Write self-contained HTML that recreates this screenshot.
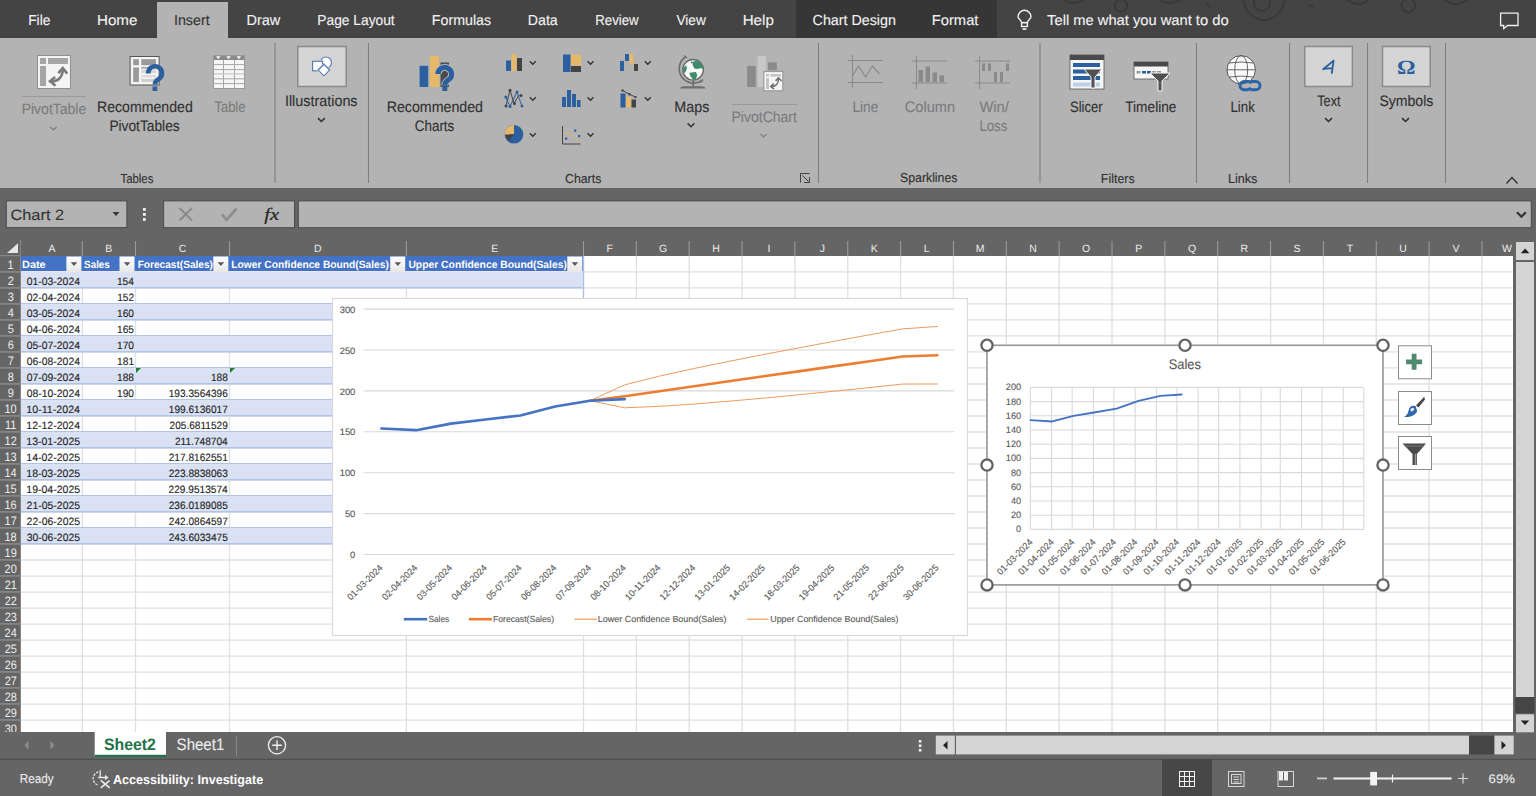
<!DOCTYPE html>
<html><head><meta charset="utf-8"><title>Excel</title>
<style>html,body{margin:0;padding:0;background:#656565;}body{width:1536px;height:796px;overflow:hidden;position:relative;font-family:"Liberation Sans",sans-serif;}svg{position:absolute;left:0;top:0;display:block}</style>
</head><body>
<svg width="1536" height="796" viewBox="0 0 1536 796" text-rendering="geometricPrecision">
<rect x="0" y="0" width="1536" height="38" fill="#444444"/>
<rect x="796" y="0" width="201" height="38" fill="#363636"/>
<rect x="0" y="38" width="1536" height="150" fill="#b3b3b3"/>
<rect x="0" y="188" width="1536" height="52" fill="#656565"/>
<rect x="157" y="2" width="71" height="36" fill="#b3b3b3"/>
<text x="28.20" y="24.80" font-size="14.5" fill="#f2f2f2" font-weight="400" font-family="Liberation Sans" stroke="#f2f2f2" stroke-width="0.12" textLength="22.25" lengthAdjust="spacingAndGlyphs">File</text>
<text x="96.99" y="24.80" font-size="14.5" fill="#f2f2f2" font-weight="400" font-family="Liberation Sans" stroke="#f2f2f2" stroke-width="0.12" textLength="40.43" lengthAdjust="spacingAndGlyphs">Home</text>
<text x="246.54" y="24.80" font-size="14.5" fill="#f2f2f2" font-weight="400" font-family="Liberation Sans" stroke="#f2f2f2" stroke-width="0.12" textLength="33.74" lengthAdjust="spacingAndGlyphs">Draw</text>
<text x="317.30" y="24.80" font-size="14.5" fill="#f2f2f2" font-weight="400" font-family="Liberation Sans" stroke="#f2f2f2" stroke-width="0.12" textLength="77.38" lengthAdjust="spacingAndGlyphs">Page Layout</text>
<text x="431.86" y="24.80" font-size="14.5" fill="#f2f2f2" font-weight="400" font-family="Liberation Sans" stroke="#f2f2f2" stroke-width="0.12" textLength="59.20" lengthAdjust="spacingAndGlyphs">Formulas</text>
<text x="527.87" y="24.80" font-size="14.5" fill="#f2f2f2" font-weight="400" font-family="Liberation Sans" stroke="#f2f2f2" stroke-width="0.12" textLength="29.86" lengthAdjust="spacingAndGlyphs">Data</text>
<text x="595.34" y="24.80" font-size="14.5" fill="#f2f2f2" font-weight="400" font-family="Liberation Sans" stroke="#f2f2f2" stroke-width="0.12" textLength="43.34" lengthAdjust="spacingAndGlyphs">Review</text>
<text x="676.43" y="24.80" font-size="14.5" fill="#f2f2f2" font-weight="400" font-family="Liberation Sans" stroke="#f2f2f2" stroke-width="0.12" textLength="29.36" lengthAdjust="spacingAndGlyphs">View</text>
<text x="742.69" y="24.80" font-size="14.5" fill="#f2f2f2" font-weight="400" font-family="Liberation Sans" stroke="#f2f2f2" stroke-width="0.12" textLength="31.14" lengthAdjust="spacingAndGlyphs">Help</text>
<text x="812.59" y="24.80" font-size="14.5" fill="#f2f2f2" font-weight="400" font-family="Liberation Sans" stroke="#f2f2f2" stroke-width="0.12" textLength="83.36" lengthAdjust="spacingAndGlyphs">Chart Design</text>
<text x="931.82" y="24.80" font-size="14.5" fill="#f2f2f2" font-weight="400" font-family="Liberation Sans" stroke="#f2f2f2" stroke-width="0.12" textLength="46.58" lengthAdjust="spacingAndGlyphs">Format</text>
<text x="173.91" y="24.80" font-size="14.5" fill="#333333" font-weight="400" font-family="Liberation Sans" stroke="#333333" stroke-width="0.12" textLength="35.77" lengthAdjust="spacingAndGlyphs">Insert</text>
<text x="1047.11" y="24.80" font-size="14.5" fill="#f2f2f2" font-weight="400" font-family="Liberation Sans" stroke="#f2f2f2" stroke-width="0.12" textLength="181.48" lengthAdjust="spacingAndGlyphs">Tell me what you want to do</text>
<g fill="none" stroke="#f0f0f0" stroke-width="1.4"><path d="M1021.6 22.6C1021.6 20.4 1018 18.8 1018 16.8A6.5 6.5 0 1 1 1031 16.8C1031 18.8 1027.4 20.4 1027.4 22.6Z"/><rect x="1021.6" y="22.6" width="5.8" height="3.9"/></g><rect x="1022.6" y="28.2" width="3.8" height="1.8" fill="#e8e8e8"/>
<path d="M1500.6 13.2h17.4v12.3h-10.5l-3.8 3.2v-3.2h-3.1z" fill="none" stroke="#f0f0f0" stroke-width="1.3"/>
<g fill="none" stroke="#393939" stroke-width="2"><circle cx="1074" cy="-12" r="15"/><circle cx="1121" cy="5.5" r="6.2"/><circle cx="1170" cy="-14" r="17"/><path d="M1207 2c0 3 2 5 4.5 4.5"/><circle cx="1264" cy="0" r="20"/><circle cx="1262" cy="3" r="8"/><path d="M1309 4.5c1 2 3 2.5 5 1"/><circle cx="1358" cy="-11" r="15"/><circle cx="1408.3" cy="5.5" r="6.8"/><circle cx="1456" cy="-14" r="18"/></g>
<line x1="275" y1="43" x2="275" y2="183" stroke="#7f7f7f" stroke-width="1.1"/>
<line x1="368.5" y1="43" x2="368.5" y2="183" stroke="#7f7f7f" stroke-width="1.1"/>
<line x1="818.5" y1="43" x2="818.5" y2="183" stroke="#7f7f7f" stroke-width="1.1"/>
<line x1="1040" y1="43" x2="1040" y2="183" stroke="#7f7f7f" stroke-width="1.1"/>
<line x1="1196.5" y1="43" x2="1196.5" y2="183" stroke="#7f7f7f" stroke-width="1.1"/>
<line x1="1289.5" y1="43" x2="1289.5" y2="183" stroke="#7f7f7f" stroke-width="1.1"/>
<line x1="1367.5" y1="43" x2="1367.5" y2="183" stroke="#7f7f7f" stroke-width="1.1"/>
<line x1="1445.5" y1="43" x2="1445.5" y2="183" stroke="#7f7f7f" stroke-width="1.1"/>
<text x="120.47" y="182.60" font-size="13" fill="#303030" font-weight="400" font-family="Liberation Sans" stroke="#303030" stroke-width="0.12" textLength="32.93" lengthAdjust="spacingAndGlyphs">Tables</text>
<text x="564.98" y="182.60" font-size="13" fill="#303030" font-weight="400" font-family="Liberation Sans" stroke="#303030" stroke-width="0.12" textLength="36.35" lengthAdjust="spacingAndGlyphs">Charts</text>
<text x="900.05" y="181.80" font-size="13" fill="#303030" font-weight="400" font-family="Liberation Sans" stroke="#303030" stroke-width="0.12" textLength="57.37" lengthAdjust="spacingAndGlyphs">Sparklines</text>
<text x="1100.80" y="182.60" font-size="13" fill="#303030" font-weight="400" font-family="Liberation Sans" stroke="#303030" stroke-width="0.12" textLength="33.86" lengthAdjust="spacingAndGlyphs">Filters</text>
<text x="1227.99" y="182.60" font-size="13" fill="#303030" font-weight="400" font-family="Liberation Sans" stroke="#303030" stroke-width="0.12" textLength="29.44" lengthAdjust="spacingAndGlyphs">Links</text>
<g fill="none" stroke="#404040" stroke-width="1"><path d="M800.5 182.5v-9h9"/><path d="M802.5 175.5l6 6M809.5 177v5.5h-5.5"/></g>
<path d="M1506.5 183.5l5.5-6 5.5 6" fill="none" stroke="#303030" stroke-width="1.3"/>
<text x="21.68" y="114.40" font-size="15" fill="#7b7b7b" font-weight="400" font-family="Liberation Sans" stroke="#7b7b7b" stroke-width="0.12" textLength="64.53" lengthAdjust="spacingAndGlyphs">PivotTable</text>
<line x1="22" y1="96.5" x2="86" y2="96.5" stroke="#9a9a9a" stroke-width="1"/>
<text x="96.97" y="111.80" font-size="15.2" fill="#303030" font-weight="400" font-family="Liberation Sans" stroke="#303030" stroke-width="0.12" textLength="95.77" lengthAdjust="spacingAndGlyphs">Recommended</text>
<text x="109.40" y="130.80" font-size="15.2" fill="#303030" font-weight="400" font-family="Liberation Sans" stroke="#303030" stroke-width="0.12" textLength="70.27" lengthAdjust="spacingAndGlyphs">PivotTables</text>
<text x="214.54" y="111.80" font-size="15.2" fill="#7b7b7b" font-weight="400" font-family="Liberation Sans" stroke="#7b7b7b" stroke-width="0.12" textLength="30.85" lengthAdjust="spacingAndGlyphs">Table</text>
<text x="284.91" y="106.40" font-size="15.2" fill="#303030" font-weight="400" font-family="Liberation Sans" stroke="#303030" stroke-width="0.12" textLength="72.66" lengthAdjust="spacingAndGlyphs">Illustrations</text>
<text x="386.66" y="111.80" font-size="15.2" fill="#303030" font-weight="400" font-family="Liberation Sans" stroke="#303030" stroke-width="0.12" textLength="96.38" lengthAdjust="spacingAndGlyphs">Recommended</text>
<text x="414.83" y="130.80" font-size="15.2" fill="#303030" font-weight="400" font-family="Liberation Sans" stroke="#303030" stroke-width="0.12" textLength="39.44" lengthAdjust="spacingAndGlyphs">Charts</text>
<text x="674.36" y="111.80" font-size="15.2" fill="#303030" font-weight="400" font-family="Liberation Sans" stroke="#303030" stroke-width="0.12" textLength="34.95" lengthAdjust="spacingAndGlyphs">Maps</text>
<line x1="732" y1="104.5" x2="797" y2="104.5" stroke="#9a9a9a" stroke-width="1"/>
<text x="731.48" y="122.40" font-size="15.2" fill="#7b7b7b" font-weight="400" font-family="Liberation Sans" stroke="#7b7b7b" stroke-width="0.12" textLength="65.44" lengthAdjust="spacingAndGlyphs">PivotChart</text>
<text x="852.41" y="111.80" font-size="15.2" fill="#7b7b7b" font-weight="400" font-family="Liberation Sans" stroke="#7b7b7b" stroke-width="0.12" textLength="25.82" lengthAdjust="spacingAndGlyphs">Line</text>
<text x="904.77" y="111.80" font-size="15.2" fill="#7b7b7b" font-weight="400" font-family="Liberation Sans" stroke="#7b7b7b" stroke-width="0.12" textLength="50.29" lengthAdjust="spacingAndGlyphs">Column</text>
<text x="979.43" y="111.80" font-size="15.2" fill="#7b7b7b" font-weight="400" font-family="Liberation Sans" stroke="#7b7b7b" stroke-width="0.12" textLength="29.37" lengthAdjust="spacingAndGlyphs">Win/</text>
<text x="979.45" y="130.80" font-size="15.2" fill="#7b7b7b" font-weight="400" font-family="Liberation Sans" stroke="#7b7b7b" stroke-width="0.12" textLength="27.85" lengthAdjust="spacingAndGlyphs">Loss</text>
<text x="1069.91" y="111.80" font-size="15.2" fill="#303030" font-weight="400" font-family="Liberation Sans" stroke="#303030" stroke-width="0.12" textLength="32.80" lengthAdjust="spacingAndGlyphs">Slicer</text>
<text x="1125.23" y="111.80" font-size="15.2" fill="#303030" font-weight="400" font-family="Liberation Sans" stroke="#303030" stroke-width="0.12" textLength="51.22" lengthAdjust="spacingAndGlyphs">Timeline</text>
<text x="1230.44" y="111.80" font-size="15.2" fill="#303030" font-weight="400" font-family="Liberation Sans" stroke="#303030" stroke-width="0.12" textLength="24.36" lengthAdjust="spacingAndGlyphs">Link</text>
<text x="1317.25" y="106.40" font-size="15.2" fill="#303030" font-weight="400" font-family="Liberation Sans" stroke="#303030" stroke-width="0.12" textLength="23.27" lengthAdjust="spacingAndGlyphs">Text</text>
<text x="1379.47" y="106.40" font-size="15.2" fill="#303030" font-weight="400" font-family="Liberation Sans" stroke="#303030" stroke-width="0.12" textLength="53.82" lengthAdjust="spacingAndGlyphs">Symbols</text>
<path d="M50.5 127.0l3 3l3 -3" fill="none" stroke="#7b7b7b" stroke-width="1.1"/>
<path d="M318.0 118.1l3.4 3.4l3.4 -3.4" fill="none" stroke="#303030" stroke-width="1.5"/>
<path d="M687.6 123.3l3.4 3.4l3.4 -3.4" fill="none" stroke="#303030" stroke-width="1.5"/>
<path d="M760.5 134.0l3 3l3 -3" fill="none" stroke="#7b7b7b" stroke-width="1.1"/>
<path d="M1325.1 118.1l3.4 3.4l3.4 -3.4" fill="none" stroke="#303030" stroke-width="1.5"/>
<path d="M1402.1 118.1l3.4 3.4l3.4 -3.4" fill="none" stroke="#303030" stroke-width="1.5"/>
<path d="M529.8 61.3l3 3l3 -3" fill="none" stroke="#303030" stroke-width="1.3"/>
<path d="M529.8 97.3l3 3l3 -3" fill="none" stroke="#303030" stroke-width="1.3"/>
<path d="M529.8 133.3l3 3l3 -3" fill="none" stroke="#303030" stroke-width="1.3"/>
<path d="M587.5 61.3l3 3l3 -3" fill="none" stroke="#303030" stroke-width="1.3"/>
<path d="M587.5 97.3l3 3l3 -3" fill="none" stroke="#303030" stroke-width="1.3"/>
<path d="M587.5 133.3l3 3l3 -3" fill="none" stroke="#303030" stroke-width="1.3"/>
<path d="M644.8 61.3l3 3l3 -3" fill="none" stroke="#303030" stroke-width="1.3"/>
<path d="M644.8 97.3l3 3l3 -3" fill="none" stroke="#303030" stroke-width="1.3"/>
<rect x="297.8" y="46.5" width="48.39999999999998" height="40" fill="#d4d4d4" stroke="#8a8a8a" stroke-width="1.5"/>
<rect x="1304.8" y="46.5" width="47.600000000000136" height="40" fill="#d4d4d4" stroke="#8a8a8a" stroke-width="1.5"/>
<rect x="1382.5" y="46.5" width="47.700000000000045" height="40" fill="#d4d4d4" stroke="#8a8a8a" stroke-width="1.5"/>
<g transform="translate(37,55)"><rect x="0.5" y="0.5" width="33" height="33" fill="#f4f4f4" stroke="#8f8f8f"/><rect x="3" y="3" width="6" height="6" fill="#a6a6a6"/><rect x="11" y="3" width="20" height="6" fill="#a6a6a6"/><rect x="3" y="11" width="6" height="20" fill="#a6a6a6"/><path d="M14.5 26.5C20 26.5 25.5 23 25.8 14.5" fill="none" stroke="#7a7a7a" stroke-width="2.6"/><path d="M21.3 18.2L25.8 13 30.2 18.6" fill="none" stroke="#7a7a7a" stroke-width="2.6" stroke-linejoin="miter"/><path d="M18.2 22L13 26.3 18.5 30.8" fill="none" stroke="#7a7a7a" stroke-width="2.6" stroke-linejoin="miter"/></g>
<g transform="translate(129.6,56)"><rect x="0.5" y="0.5" width="29" height="28.5" fill="#f4f4f4" stroke="#555"/><rect x="3.6" y="3.2" width="5.7" height="6" fill="#9a9a9a"/><rect x="11.7" y="3.2" width="14.7" height="6" fill="#9a9a9a"/><rect x="3.6" y="11.5" width="5.7" height="14.5" fill="#9a9a9a"/><rect x="11.7" y="11.2" width="14.7" height="1.2" fill="#8a8a8a"/><rect x="11.7" y="13.5" width="14.7" height="3.5" fill="#d6d6d6"/><rect x="11.7" y="19" width="14.7" height="2.5" fill="#dcdcdc"/><rect x="11.7" y="23" width="14.7" height="3" fill="#cfcfcf"/><path d="M18.6 17.5A6.9 6.9 0 1 1 29.5 22.8Q25.3 24.8 25.3 28.5" fill="none" stroke="#2b5f9e" stroke-width="4.6"/><rect x="22.9" y="30.5" width="4.8" height="4.5" fill="#2b5f9e"/></g>
<g transform="translate(213,55)"><rect x="0" y="0" width="32" height="34" fill="#f6f6f6"/><rect x="0" y="0" width="32" height="5" fill="#8a8a8a"/><path d="M3 1.3h4.6l-2.3 2.9zM13.2 1.3h4.6l-2.3 2.9zM23.6 1.3h4.6l-2.3 2.9z" fill="#f6f6f6"/><g stroke="#a6a6a6" stroke-width="1"><path d="M10.5 5v29M21.5 5v29M0 9.6h32M0 14.6h32M0 23.8h32M0 28.6h32"/></g><path d="M0 18.9h32" stroke="#c6c6c6" stroke-width="1.2"/><rect x="0.5" y="0.5" width="31" height="33" fill="none" stroke="#9a9a9a"/></g>
<g fill="#ffffff" stroke="#4f7ab5" stroke-width="1.1"><circle cx="325.9" cy="62.6" r="5.6"/><rect x="312.6" y="61.3" width="9.8" height="9.5" stroke="#d4d4d4" stroke-width="2.4"/><rect x="312.6" y="61.3" width="9.8" height="9.5"/><path d="M323.9 64.4l5.7 5.7-5.7 5.7-5.7-5.7z" stroke="#d4d4d4" stroke-width="2.4"/><path d="M323.9 64.4l5.7 5.7-5.7 5.7-5.7-5.7z"/></g>
<g transform="translate(419,56)"><rect x="0.6" y="9.8" width="8.6" height="21.2" fill="#2b5f9e"/><rect x="11" y="0" width="9" height="31" fill="#e6b86a"/><rect x="21.5" y="6.5" width="8.5" height="24.5" fill="#4a4a4a"/><path d="M19 18A6.8 6.8 0 1 1 30.6 23Q25.8 25.5 25.8 29.5" fill="none" stroke="#b3b3b3" stroke-width="7"/><path d="M19 18A6.8 6.8 0 1 1 30.6 23Q25.8 25.5 25.8 29.5" fill="none" stroke="#2b5f9e" stroke-width="5"/><rect x="23.3" y="30.5" width="5" height="4.5" fill="#2b5f9e"/></g>
<g transform="translate(506,54)"><rect x="0" y="6.5" width="5" height="10.5" fill="#2b5f9e"/><rect x="5.5" y="0" width="5" height="17" fill="#e6b86a"/><rect x="11" y="4" width="5" height="13" fill="#444"/></g>
<g transform="translate(563,54.5)"><rect x="0" y="0" width="7.5" height="17.5" fill="#2b5f9e"/><rect x="8" y="0" width="10" height="11" fill="#e6b86a"/><rect x="8" y="11.5" width="10" height="6" fill="#444"/></g>
<g transform="translate(620,54)"><rect x="0" y="7" width="4" height="10" fill="#2b5f9e"/><rect x="5" y="0" width="4" height="7" fill="#2b5f9e"/><rect x="9.5" y="0" width="4" height="10.5" fill="#e6b86a"/><rect x="14" y="10" width="4" height="7" fill="#444"/></g>
<g transform="translate(505,89.5)"><path d="M1 16.5L5 0.5 9 14 14 5.5" fill="none" stroke="#444" stroke-width="1"/><path d="M0.5 7.5L5 17 12 2.5 17 17" fill="none" stroke="#2b5f9e" stroke-width="1"/><circle cx="1" cy="16.5" r="1.5" fill="#444"/><circle cx="5" cy="0.8" r="1.5" fill="#444"/><circle cx="9.5" cy="14" r="1.5" fill="#444"/><circle cx="16" cy="6" r="1.5" fill="#444"/><circle cx="0.8" cy="7.5" r="1.5" fill="#2b5f9e"/><circle cx="5" cy="17" r="1.5" fill="#2b5f9e"/><circle cx="12" cy="2.5" r="1.5" fill="#2b5f9e"/><circle cx="17" cy="16.5" r="1.5" fill="#2b5f9e"/></g>
<g transform="translate(562,90)" fill="#2b5f9e"><rect x="0" y="7" width="4" height="10"/><rect x="5" y="0" width="4" height="17"/><rect x="10" y="4" width="4" height="13"/><rect x="15" y="10" width="3.5" height="7"/></g>
<g transform="translate(620.5,89.5)"><rect x="0" y="4" width="5" height="14" fill="#2b5f9e"/><rect x="5.5" y="7.5" width="5" height="10.5" fill="#e6b86a"/><rect x="11" y="10" width="4.5" height="8" fill="#444"/><path d="M2 1l7 3.8 6 2.8" fill="none" stroke="#444" stroke-width="1"/><circle cx="2" cy="1" r="1.2" fill="#444"/><circle cx="9" cy="4.8" r="1.2" fill="#444"/><circle cx="15" cy="7.6" r="1.2" fill="#444"/></g>
<g transform="translate(514,134.3)"><circle r="9.3" fill="#2b5f9e"/><path d="M0 0V-9.3A9.3 9.3 0 0 0 -9.3 0.3Z" fill="#e6b86a"/><path d="M0 0L-9.3 0.3A9.3 9.3 0 0 0 -5 6.5Z" fill="#444"/></g>
<g transform="translate(562,126)"><path d="M0.5 0v18h18" fill="none" stroke="#444" stroke-width="1"/><rect x="3" y="6" width="2.2" height="2.2" fill="#e6b86a"/><rect x="12" y="3.5" width="2.2" height="2.2" fill="#2b5f9e"/><rect x="8.5" y="8.5" width="2.2" height="2.2" fill="#e6b86a"/><rect x="16" y="9" width="2.2" height="2.2" fill="#2b5f9e"/><rect x="3" y="11.5" width="2.2" height="2.2" fill="#2b5f9e"/><rect x="13.5" y="12.5" width="2.2" height="2.2" fill="#e6b86a"/></g>
<g><path d="M685.3 57A13.2 13.2 0 0 0 701.9 80.5" fill="none" stroke="#6e6e6e" stroke-width="1.6"/><path d="M684 55.5l3 2.5M700.5 82.5l2.5-3" stroke="#6e6e6e" stroke-width="1.4"/><circle cx="693.1" cy="69.8" r="10.3" fill="#f8f8f8" stroke="#6a6a6a" stroke-width="1.3"/><path d="M692.8 61.8L696.5 60.8 700.8 63 702.8 66.5 703.2 69.2 700.6 68 697.6 69.1 694.4 68.6 693.2 66.2 692.5 63.8Z" fill="#3d8a6c"/><path d="M690.8 61.8l1.5-.6.3 1.8-1.6.6z" fill="#3d8a6c"/><path d="M683.8 67L686.6 65.4 686.8 69 685.3 72 683.5 73.5 683.1 70Z" fill="#3d8a6c"/><path d="M689.3 72.8L696 72 697.2 75 695.8 79.4 693.3 80 690.3 76Z" fill="#3d8a6c"/><rect x="692.3" y="81" width="1.8" height="5.5" fill="#6e6e6e"/><path d="M680.2 88.6c0-1.6 1.5-2.4 4-2.4h17c2.5 0 4 .8 4 2.4z" fill="#6e6e6e"/></g>
<g><rect x="747.1" y="66" width="8.7" height="21" fill="#8a8a8a"/><rect x="757.7" y="56" width="8.3" height="31" fill="#c8c8c8"/><rect x="768" y="62.3" width="8.8" height="8" fill="#8a8a8a"/><rect x="763.8" y="71.5" width="19" height="19.3" fill="#f6f6f6" stroke="#9a9a9a" stroke-width="1.2"/><rect x="766" y="74" width="3" height="2.6" fill="#c4c4c4"/><rect x="770.5" y="74" width="10.5" height="2.6" fill="#c4c4c4"/><rect x="766" y="78" width="3" height="11" fill="#c4c4c4"/><path d="M771.2 86.6C775.2 86.6 778.6 84 778.6 78.6M775.6 80.9L778.6 77.8 781.6 81M773.8 83.6L770.8 86.5 774 89.2" fill="none" stroke="#727272" stroke-width="1.6"/></g>
<g transform="translate(848,55)" fill="none" stroke="#8a8a8a" stroke-width="1"><path d="M0 5.5h35M0 27.5h35M4.5 0v33"/><path d="M4.5 21l6-10 7 11 7-11 7 8" stroke-width="1.2"/></g>
<g transform="translate(912,56)"><g fill="none" stroke="#8a8a8a" stroke-width="1"><path d="M0 5h35M0 27h35M4.5 0v33"/></g><g fill="#8a8a8a"><rect x="6.5" y="14" width="4.5" height="12"/><rect x="13.5" y="10.5" width="4.5" height="15.5"/><rect x="20.5" y="16.5" width="4.5" height="9.5"/><rect x="27.5" y="19.5" width="4.5" height="6.5"/></g></g>
<g transform="translate(975,56)"><g fill="none" stroke="#8a8a8a" stroke-width="1"><path d="M0 5h35M0 27h35M4.5 0v33"/></g><g fill="#8a8a8a"><rect x="7" y="7.5" width="3" height="7.5"/><rect x="13" y="7.5" width="3" height="7.5"/><rect x="19" y="16" width="3" height="10"/><rect x="25" y="16" width="3" height="10"/><rect x="31" y="7.5" width="3" height="7.5"/></g></g>
<g transform="translate(1070,55)"><rect x="0" y="0" width="34" height="34" fill="#f6f6f6" stroke="#555" stroke-width="0.8"/><rect x="0" y="0" width="34" height="5" fill="#4a4a4a"/><rect x="3" y="8" width="27" height="4" fill="#2b5f9e"/><rect x="3" y="14.5" width="27" height="4" fill="#2b5f9e"/><rect x="3" y="21" width="27" height="4" fill="#2b5f9e"/><rect x="3" y="27.5" width="27" height="4" fill="#bcd0e8"/><path d="M14 14h18l-7 8v11h-4v-11z" fill="#505050" stroke="#f6f6f6" stroke-width="1"/></g>
<g transform="translate(1134,62)"><rect x="0" y="0" width="34" height="17" fill="#f6f6f6" stroke="#555" stroke-width="0.8"/><rect x="0" y="0" width="34" height="4.5" fill="#4a4a4a"/><rect x="2.5" y="9" width="4" height="2.5" fill="#9a9a9a"/><rect x="8" y="9" width="4" height="2.5" fill="#2b5f9e"/><rect x="13" y="9" width="4" height="2.5" fill="#2b5f9e"/><rect x="18" y="9" width="4" height="2.5" fill="#9a9a9a"/><rect x="23" y="9" width="4" height="2.5" fill="#9a9a9a"/><path d="M16 11h20l-8 8v10h-4v-10z" fill="#505050" stroke="#f6f6f6" stroke-width="1"/></g>
<g><circle cx="1241.2" cy="69.8" r="14.2" fill="#fafafa" stroke="#555" stroke-width="1"/><g fill="none" stroke="#555" stroke-width="0.9"><ellipse cx="1241.2" cy="69.8" rx="6.5" ry="14.2"/><path d="M1227 69.8h28.4"/><path d="M1229 63Q1241.2 61 1253.4 63M1229 77Q1241.2 75.2 1253.4 77"/></g><g fill="none" stroke="#2b64a8" stroke-width="3"><path d="M1249.5 81.5h-5.4a4.1 4.1 0 0 0 0 8.2h3.4a4.1 4.1 0 0 0 3.4-1.8" /><path d="M1250.5 89.7h5.4a4.1 4.1 0 0 0 0-8.2h-3.4a4.1 4.1 0 0 0-3.4 1.8"/></g></g>
<path d="M1323.2 69.2L1333.6 60.6 1331.8 73M1323.6 68.8L1332.3 68.2" fill="none" stroke="#2b5f9e" stroke-width="1.8" stroke-linecap="round" stroke-linejoin="round"/>
<text x="1396.96" y="73.60" font-size="20" fill="#2b5f9e" font-weight="700" font-family="Liberation Serif" textLength="18.50" lengthAdjust="spacingAndGlyphs">Ω</text>
<rect x="6.3" y="200.9" width="120.6" height="26.7" fill="#b3b3b3" stroke="#4a4a4a" stroke-width="1"/>
<text x="10.48" y="220.30" font-size="15" fill="#333333" font-weight="400" font-family="Liberation Sans" stroke="#333333" stroke-width="0.12" textLength="53.62" lengthAdjust="spacingAndGlyphs">Chart 2</text>
<path d="M112.5 212h7l-3.5 4z" fill="#333"/>
<rect x="143" y="208" width="2.8" height="2.8" fill="#f0f0f0"/>
<rect x="143" y="213" width="2.8" height="2.8" fill="#f0f0f0"/>
<rect x="143" y="218" width="2.8" height="2.8" fill="#f0f0f0"/>
<rect x="163.6" y="200.9" width="130.9" height="26.8" fill="#b3b3b3" stroke="#4a4a4a" stroke-width="1"/>
<path d="M179.5 208l12.5 12.5M192 208l-12.5 12.5" stroke="#8a8a8a" stroke-width="2"/>
<path d="M222 214.3l4.6 5.6 10-11.4" fill="none" stroke="#8e8e8e" stroke-width="2.8"/>
<text x="264.19" y="219.50" font-size="17.5" fill="#303030" font-weight="400" font-family="Liberation Serif" font-style="italic" textLength="14.94" lengthAdjust="spacingAndGlyphs">fx</text>
<text x="264.19" y="219.50" font-size="17.5" fill="#303030" font-weight="400" font-family="Liberation Serif" font-style="italic" textLength="14.94" lengthAdjust="spacingAndGlyphs">fx</text>
<rect x="298.3" y="200.9" width="1233" height="26.8" fill="#b3b3b3" stroke="#4a4a4a" stroke-width="1"/>
<path d="M1517 212.3l4.4 4.4 4.4-4.4" fill="none" stroke="#333" stroke-width="2.3"/>
<rect x="0" y="240" width="1536" height="16" fill="#656565"/>
<rect x="0" y="256" width="21" height="476" fill="#656565"/>
<rect x="21" y="256" width="1492" height="476" fill="#ffffff"/>
<line x1="21" y1="271.9" x2="1513" y2="271.9" stroke="#e0e0e0" stroke-width="1.35"/>
<line x1="21" y1="287.90799999999996" x2="1513" y2="287.90799999999996" stroke="#e0e0e0" stroke-width="1.35"/>
<line x1="21" y1="303.916" x2="1513" y2="303.916" stroke="#e0e0e0" stroke-width="1.35"/>
<line x1="21" y1="319.924" x2="1513" y2="319.924" stroke="#e0e0e0" stroke-width="1.35"/>
<line x1="21" y1="335.93199999999996" x2="1513" y2="335.93199999999996" stroke="#e0e0e0" stroke-width="1.35"/>
<line x1="21" y1="351.93999999999994" x2="1513" y2="351.93999999999994" stroke="#e0e0e0" stroke-width="1.35"/>
<line x1="21" y1="367.948" x2="1513" y2="367.948" stroke="#e0e0e0" stroke-width="1.35"/>
<line x1="21" y1="383.95599999999996" x2="1513" y2="383.95599999999996" stroke="#e0e0e0" stroke-width="1.35"/>
<line x1="21" y1="399.96399999999994" x2="1513" y2="399.96399999999994" stroke="#e0e0e0" stroke-width="1.35"/>
<line x1="21" y1="415.972" x2="1513" y2="415.972" stroke="#e0e0e0" stroke-width="1.35"/>
<line x1="21" y1="431.97999999999996" x2="1513" y2="431.97999999999996" stroke="#e0e0e0" stroke-width="1.35"/>
<line x1="21" y1="447.98799999999994" x2="1513" y2="447.98799999999994" stroke="#e0e0e0" stroke-width="1.35"/>
<line x1="21" y1="463.996" x2="1513" y2="463.996" stroke="#e0e0e0" stroke-width="1.35"/>
<line x1="21" y1="480.00399999999996" x2="1513" y2="480.00399999999996" stroke="#e0e0e0" stroke-width="1.35"/>
<line x1="21" y1="496.01199999999994" x2="1513" y2="496.01199999999994" stroke="#e0e0e0" stroke-width="1.35"/>
<line x1="21" y1="512.02" x2="1513" y2="512.02" stroke="#e0e0e0" stroke-width="1.35"/>
<line x1="21" y1="528.028" x2="1513" y2="528.028" stroke="#e0e0e0" stroke-width="1.35"/>
<line x1="21" y1="544.036" x2="1513" y2="544.036" stroke="#e0e0e0" stroke-width="1.35"/>
<line x1="21" y1="560.044" x2="1513" y2="560.044" stroke="#e0e0e0" stroke-width="1.35"/>
<line x1="21" y1="576.0519999999999" x2="1513" y2="576.0519999999999" stroke="#e0e0e0" stroke-width="1.35"/>
<line x1="21" y1="592.06" x2="1513" y2="592.06" stroke="#e0e0e0" stroke-width="1.35"/>
<line x1="21" y1="608.068" x2="1513" y2="608.068" stroke="#e0e0e0" stroke-width="1.35"/>
<line x1="21" y1="624.076" x2="1513" y2="624.076" stroke="#e0e0e0" stroke-width="1.35"/>
<line x1="21" y1="640.084" x2="1513" y2="640.084" stroke="#e0e0e0" stroke-width="1.35"/>
<line x1="21" y1="656.092" x2="1513" y2="656.092" stroke="#e0e0e0" stroke-width="1.35"/>
<line x1="21" y1="672.0999999999999" x2="1513" y2="672.0999999999999" stroke="#e0e0e0" stroke-width="1.35"/>
<line x1="21" y1="688.108" x2="1513" y2="688.108" stroke="#e0e0e0" stroke-width="1.35"/>
<line x1="21" y1="704.116" x2="1513" y2="704.116" stroke="#e0e0e0" stroke-width="1.35"/>
<line x1="21" y1="720.124" x2="1513" y2="720.124" stroke="#e0e0e0" stroke-width="1.35"/>
<line x1="82.3" y1="256" x2="82.3" y2="732" stroke="#e0e0e0" stroke-width="1.35"/>
<line x1="135.5" y1="256" x2="135.5" y2="732" stroke="#e0e0e0" stroke-width="1.35"/>
<line x1="229.5" y1="256" x2="229.5" y2="732" stroke="#e0e0e0" stroke-width="1.35"/>
<line x1="406.40000000000003" y1="256" x2="406.40000000000003" y2="732" stroke="#e0e0e0" stroke-width="1.35"/>
<line x1="583.5" y1="256" x2="583.5" y2="732" stroke="#e0e0e0" stroke-width="1.35"/>
<line x1="636.35" y1="256" x2="636.35" y2="732" stroke="#e0e0e0" stroke-width="1.35"/>
<line x1="689.2" y1="256" x2="689.2" y2="732" stroke="#e0e0e0" stroke-width="1.35"/>
<line x1="742.0500000000001" y1="256" x2="742.0500000000001" y2="732" stroke="#e0e0e0" stroke-width="1.35"/>
<line x1="794.9" y1="256" x2="794.9" y2="732" stroke="#e0e0e0" stroke-width="1.35"/>
<line x1="847.75" y1="256" x2="847.75" y2="732" stroke="#e0e0e0" stroke-width="1.35"/>
<line x1="900.6" y1="256" x2="900.6" y2="732" stroke="#e0e0e0" stroke-width="1.35"/>
<line x1="953.4499999999999" y1="256" x2="953.4499999999999" y2="732" stroke="#e0e0e0" stroke-width="1.35"/>
<line x1="1006.3000000000001" y1="256" x2="1006.3000000000001" y2="732" stroke="#e0e0e0" stroke-width="1.35"/>
<line x1="1059.1499999999999" y1="256" x2="1059.1499999999999" y2="732" stroke="#e0e0e0" stroke-width="1.35"/>
<line x1="1112.0" y1="256" x2="1112.0" y2="732" stroke="#e0e0e0" stroke-width="1.35"/>
<line x1="1164.85" y1="256" x2="1164.85" y2="732" stroke="#e0e0e0" stroke-width="1.35"/>
<line x1="1217.6999999999998" y1="256" x2="1217.6999999999998" y2="732" stroke="#e0e0e0" stroke-width="1.35"/>
<line x1="1270.55" y1="256" x2="1270.55" y2="732" stroke="#e0e0e0" stroke-width="1.35"/>
<line x1="1323.3999999999999" y1="256" x2="1323.3999999999999" y2="732" stroke="#e0e0e0" stroke-width="1.35"/>
<line x1="1376.25" y1="256" x2="1376.25" y2="732" stroke="#e0e0e0" stroke-width="1.35"/>
<line x1="1429.1" y1="256" x2="1429.1" y2="732" stroke="#e0e0e0" stroke-width="1.35"/>
<line x1="1481.9499999999998" y1="256" x2="1481.9499999999998" y2="732" stroke="#e0e0e0" stroke-width="1.35"/>
<line x1="82.3" y1="241" x2="82.3" y2="256" stroke="#9a9a9a" stroke-width="1.1"/>
<line x1="135.5" y1="241" x2="135.5" y2="256" stroke="#9a9a9a" stroke-width="1.1"/>
<line x1="229.5" y1="241" x2="229.5" y2="256" stroke="#9a9a9a" stroke-width="1.1"/>
<line x1="406.40000000000003" y1="241" x2="406.40000000000003" y2="256" stroke="#9a9a9a" stroke-width="1.1"/>
<line x1="583.5" y1="241" x2="583.5" y2="256" stroke="#9a9a9a" stroke-width="1.1"/>
<line x1="636.35" y1="241" x2="636.35" y2="256" stroke="#9a9a9a" stroke-width="1.1"/>
<line x1="689.2" y1="241" x2="689.2" y2="256" stroke="#9a9a9a" stroke-width="1.1"/>
<line x1="742.0500000000001" y1="241" x2="742.0500000000001" y2="256" stroke="#9a9a9a" stroke-width="1.1"/>
<line x1="794.9" y1="241" x2="794.9" y2="256" stroke="#9a9a9a" stroke-width="1.1"/>
<line x1="847.75" y1="241" x2="847.75" y2="256" stroke="#9a9a9a" stroke-width="1.1"/>
<line x1="900.6" y1="241" x2="900.6" y2="256" stroke="#9a9a9a" stroke-width="1.1"/>
<line x1="953.4499999999999" y1="241" x2="953.4499999999999" y2="256" stroke="#9a9a9a" stroke-width="1.1"/>
<line x1="1006.3000000000001" y1="241" x2="1006.3000000000001" y2="256" stroke="#9a9a9a" stroke-width="1.1"/>
<line x1="1059.1499999999999" y1="241" x2="1059.1499999999999" y2="256" stroke="#9a9a9a" stroke-width="1.1"/>
<line x1="1112.0" y1="241" x2="1112.0" y2="256" stroke="#9a9a9a" stroke-width="1.1"/>
<line x1="1164.85" y1="241" x2="1164.85" y2="256" stroke="#9a9a9a" stroke-width="1.1"/>
<line x1="1217.6999999999998" y1="241" x2="1217.6999999999998" y2="256" stroke="#9a9a9a" stroke-width="1.1"/>
<line x1="1270.55" y1="241" x2="1270.55" y2="256" stroke="#9a9a9a" stroke-width="1.1"/>
<line x1="1323.3999999999999" y1="241" x2="1323.3999999999999" y2="256" stroke="#9a9a9a" stroke-width="1.1"/>
<line x1="1376.25" y1="241" x2="1376.25" y2="256" stroke="#9a9a9a" stroke-width="1.1"/>
<line x1="1429.1" y1="241" x2="1429.1" y2="256" stroke="#9a9a9a" stroke-width="1.1"/>
<line x1="1481.9499999999998" y1="241" x2="1481.9499999999998" y2="256" stroke="#9a9a9a" stroke-width="1.1"/>
<path d="M7 252.9h11v-9.6z" fill="#e8e8e8"/>
<line x1="20.4" y1="240" x2="20.4" y2="732" stroke="#888888" stroke-width="1"/>
<line x1="0" y1="255.6" x2="21" y2="255.6" stroke="#888888" stroke-width="1.2"/>
<text x="48.51" y="252.30" font-size="10.5" fill="#ececec" font-weight="400" font-family="Liberation Sans" textLength="7.00" lengthAdjust="spacingAndGlyphs">A</text>
<text x="105.35" y="252.30" font-size="10.5" fill="#ececec" font-weight="400" font-family="Liberation Sans" textLength="7.00" lengthAdjust="spacingAndGlyphs">B</text>
<text x="178.64" y="252.30" font-size="10.5" fill="#ececec" font-weight="400" font-family="Liberation Sans" textLength="7.58" lengthAdjust="spacingAndGlyphs">C</text>
<text x="314.04" y="252.30" font-size="10.5" fill="#ececec" font-weight="400" font-family="Liberation Sans" textLength="7.58" lengthAdjust="spacingAndGlyphs">D</text>
<text x="491.30" y="252.30" font-size="10.5" fill="#ececec" font-weight="400" font-family="Liberation Sans" textLength="7.00" lengthAdjust="spacingAndGlyphs">E</text>
<text x="606.59" y="252.30" font-size="10.5" fill="#ececec" font-weight="400" font-family="Liberation Sans" textLength="6.41" lengthAdjust="spacingAndGlyphs">F</text>
<text x="659.04" y="252.30" font-size="10.5" fill="#ececec" font-weight="400" font-family="Liberation Sans" textLength="8.17" lengthAdjust="spacingAndGlyphs">G</text>
<text x="712.22" y="252.30" font-size="10.5" fill="#ececec" font-weight="400" font-family="Liberation Sans" textLength="7.58" lengthAdjust="spacingAndGlyphs">H</text>
<text x="767.56" y="252.30" font-size="10.5" fill="#ececec" font-weight="400" font-family="Liberation Sans" textLength="2.92" lengthAdjust="spacingAndGlyphs">I</text>
<text x="819.69" y="252.30" font-size="10.5" fill="#ececec" font-weight="400" font-family="Liberation Sans" textLength="5.25" lengthAdjust="spacingAndGlyphs">J</text>
<text x="870.64" y="252.30" font-size="10.5" fill="#ececec" font-weight="400" font-family="Liberation Sans" textLength="7.00" lengthAdjust="spacingAndGlyphs">K</text>
<text x="923.82" y="252.30" font-size="10.5" fill="#ececec" font-weight="400" font-family="Liberation Sans" textLength="5.84" lengthAdjust="spacingAndGlyphs">L</text>
<text x="975.64" y="252.30" font-size="10.5" fill="#ececec" font-weight="400" font-family="Liberation Sans" textLength="8.75" lengthAdjust="spacingAndGlyphs">M</text>
<text x="1029.22" y="252.30" font-size="10.5" fill="#ececec" font-weight="400" font-family="Liberation Sans" textLength="7.58" lengthAdjust="spacingAndGlyphs">N</text>
<text x="1081.93" y="252.30" font-size="10.5" fill="#ececec" font-weight="400" font-family="Liberation Sans" textLength="8.17" lengthAdjust="spacingAndGlyphs">O</text>
<text x="1135.35" y="252.30" font-size="10.5" fill="#ececec" font-weight="400" font-family="Liberation Sans" textLength="7.00" lengthAdjust="spacingAndGlyphs">P</text>
<text x="1187.93" y="252.30" font-size="10.5" fill="#ececec" font-weight="400" font-family="Liberation Sans" textLength="8.17" lengthAdjust="spacingAndGlyphs">Q</text>
<text x="1240.54" y="252.30" font-size="10.5" fill="#ececec" font-weight="400" font-family="Liberation Sans" textLength="7.58" lengthAdjust="spacingAndGlyphs">R</text>
<text x="1293.51" y="252.30" font-size="10.5" fill="#ececec" font-weight="400" font-family="Liberation Sans" textLength="7.00" lengthAdjust="spacingAndGlyphs">S</text>
<text x="1346.80" y="252.30" font-size="10.5" fill="#ececec" font-weight="400" font-family="Liberation Sans" textLength="6.41" lengthAdjust="spacingAndGlyphs">T</text>
<text x="1399.22" y="252.30" font-size="10.5" fill="#ececec" font-weight="400" font-family="Liberation Sans" textLength="7.58" lengthAdjust="spacingAndGlyphs">U</text>
<text x="1452.51" y="252.30" font-size="10.5" fill="#ececec" font-weight="400" font-family="Liberation Sans" textLength="7.00" lengthAdjust="spacingAndGlyphs">V</text>
<text x="1502.04" y="252.30" font-size="10.5" fill="#ececec" font-weight="400" font-family="Liberation Sans" textLength="9.91" lengthAdjust="spacingAndGlyphs">W</text>
<text x="7.59" y="268.80" font-size="12.2" fill="#ececec" font-weight="400" font-family="Liberation Sans" textLength="6.11" lengthAdjust="spacingAndGlyphs">1</text>
<line x1="0" y1="271.9" x2="21" y2="271.9" stroke="#8a8a8a" stroke-width="1.6"/>
<text x="7.75" y="284.80" font-size="12.2" fill="#ececec" font-weight="400" font-family="Liberation Sans" textLength="6.11" lengthAdjust="spacingAndGlyphs">2</text>
<line x1="0" y1="287.9" x2="21" y2="287.9" stroke="#8a8a8a" stroke-width="1.6"/>
<text x="7.75" y="300.80" font-size="12.2" fill="#ececec" font-weight="400" font-family="Liberation Sans" textLength="6.11" lengthAdjust="spacingAndGlyphs">3</text>
<line x1="0" y1="303.9" x2="21" y2="303.9" stroke="#8a8a8a" stroke-width="1.6"/>
<text x="7.81" y="316.80" font-size="12.2" fill="#ececec" font-weight="400" font-family="Liberation Sans" textLength="6.11" lengthAdjust="spacingAndGlyphs">4</text>
<line x1="0" y1="319.9" x2="21" y2="319.9" stroke="#8a8a8a" stroke-width="1.6"/>
<text x="7.75" y="332.80" font-size="12.2" fill="#ececec" font-weight="400" font-family="Liberation Sans" textLength="6.11" lengthAdjust="spacingAndGlyphs">5</text>
<line x1="0" y1="335.9" x2="21" y2="335.9" stroke="#8a8a8a" stroke-width="1.6"/>
<text x="7.70" y="348.80" font-size="12.2" fill="#ececec" font-weight="400" font-family="Liberation Sans" textLength="6.11" lengthAdjust="spacingAndGlyphs">6</text>
<line x1="0" y1="351.9" x2="21" y2="351.9" stroke="#8a8a8a" stroke-width="1.6"/>
<text x="7.75" y="364.80" font-size="12.2" fill="#ececec" font-weight="400" font-family="Liberation Sans" textLength="6.11" lengthAdjust="spacingAndGlyphs">7</text>
<line x1="0" y1="367.9" x2="21" y2="367.9" stroke="#8a8a8a" stroke-width="1.6"/>
<text x="7.73" y="380.80" font-size="12.2" fill="#ececec" font-weight="400" font-family="Liberation Sans" textLength="6.11" lengthAdjust="spacingAndGlyphs">8</text>
<line x1="0" y1="383.9" x2="21" y2="383.9" stroke="#8a8a8a" stroke-width="1.6"/>
<text x="7.75" y="396.80" font-size="12.2" fill="#ececec" font-weight="400" font-family="Liberation Sans" textLength="6.11" lengthAdjust="spacingAndGlyphs">9</text>
<line x1="0" y1="399.9" x2="21" y2="399.9" stroke="#8a8a8a" stroke-width="1.6"/>
<text x="4.49" y="412.80" font-size="12.2" fill="#ececec" font-weight="400" font-family="Liberation Sans" textLength="12.21" lengthAdjust="spacingAndGlyphs">10</text>
<line x1="0" y1="415.9" x2="21" y2="415.9" stroke="#8a8a8a" stroke-width="1.6"/>
<text x="4.95" y="428.80" font-size="12.2" fill="#ececec" font-weight="400" font-family="Liberation Sans" textLength="11.40" lengthAdjust="spacingAndGlyphs">11</text>
<line x1="0" y1="431.9" x2="21" y2="431.9" stroke="#8a8a8a" stroke-width="1.6"/>
<text x="4.57" y="444.80" font-size="12.2" fill="#ececec" font-weight="400" font-family="Liberation Sans" textLength="12.21" lengthAdjust="spacingAndGlyphs">12</text>
<line x1="0" y1="447.9" x2="21" y2="447.9" stroke="#8a8a8a" stroke-width="1.6"/>
<text x="4.51" y="460.80" font-size="12.2" fill="#ececec" font-weight="400" font-family="Liberation Sans" textLength="12.21" lengthAdjust="spacingAndGlyphs">13</text>
<line x1="0" y1="463.9" x2="21" y2="463.9" stroke="#8a8a8a" stroke-width="1.6"/>
<text x="4.46" y="476.80" font-size="12.2" fill="#ececec" font-weight="400" font-family="Liberation Sans" textLength="12.21" lengthAdjust="spacingAndGlyphs">14</text>
<line x1="0" y1="479.9" x2="21" y2="479.9" stroke="#8a8a8a" stroke-width="1.6"/>
<text x="4.51" y="492.80" font-size="12.2" fill="#ececec" font-weight="400" font-family="Liberation Sans" textLength="12.21" lengthAdjust="spacingAndGlyphs">15</text>
<line x1="0" y1="495.9" x2="21" y2="495.9" stroke="#8a8a8a" stroke-width="1.6"/>
<text x="4.51" y="508.80" font-size="12.2" fill="#ececec" font-weight="400" font-family="Liberation Sans" textLength="12.21" lengthAdjust="spacingAndGlyphs">16</text>
<line x1="0" y1="511.9" x2="21" y2="511.9" stroke="#8a8a8a" stroke-width="1.6"/>
<text x="4.57" y="524.80" font-size="12.2" fill="#ececec" font-weight="400" font-family="Liberation Sans" textLength="12.21" lengthAdjust="spacingAndGlyphs">17</text>
<line x1="0" y1="527.9" x2="21" y2="527.9" stroke="#8a8a8a" stroke-width="1.6"/>
<text x="4.51" y="540.80" font-size="12.2" fill="#ececec" font-weight="400" font-family="Liberation Sans" textLength="12.21" lengthAdjust="spacingAndGlyphs">18</text>
<line x1="0" y1="543.9" x2="21" y2="543.9" stroke="#8a8a8a" stroke-width="1.6"/>
<text x="4.54" y="556.80" font-size="12.2" fill="#ececec" font-weight="400" font-family="Liberation Sans" textLength="12.21" lengthAdjust="spacingAndGlyphs">19</text>
<line x1="0" y1="559.9" x2="21" y2="559.9" stroke="#8a8a8a" stroke-width="1.6"/>
<text x="4.62" y="572.80" font-size="12.2" fill="#ececec" font-weight="400" font-family="Liberation Sans" textLength="12.21" lengthAdjust="spacingAndGlyphs">20</text>
<line x1="0" y1="575.9" x2="21" y2="575.9" stroke="#8a8a8a" stroke-width="1.6"/>
<text x="4.68" y="588.80" font-size="12.2" fill="#ececec" font-weight="400" font-family="Liberation Sans" textLength="12.21" lengthAdjust="spacingAndGlyphs">21</text>
<line x1="0" y1="591.9" x2="21" y2="591.9" stroke="#8a8a8a" stroke-width="1.6"/>
<text x="4.71" y="604.80" font-size="12.2" fill="#ececec" font-weight="400" font-family="Liberation Sans" textLength="12.21" lengthAdjust="spacingAndGlyphs">22</text>
<line x1="0" y1="607.9" x2="21" y2="607.9" stroke="#8a8a8a" stroke-width="1.6"/>
<text x="4.65" y="620.80" font-size="12.2" fill="#ececec" font-weight="400" font-family="Liberation Sans" textLength="12.21" lengthAdjust="spacingAndGlyphs">23</text>
<line x1="0" y1="623.9" x2="21" y2="623.9" stroke="#8a8a8a" stroke-width="1.6"/>
<text x="4.60" y="636.80" font-size="12.2" fill="#ececec" font-weight="400" font-family="Liberation Sans" textLength="12.21" lengthAdjust="spacingAndGlyphs">24</text>
<line x1="0" y1="639.9" x2="21" y2="639.9" stroke="#8a8a8a" stroke-width="1.6"/>
<text x="4.65" y="652.80" font-size="12.2" fill="#ececec" font-weight="400" font-family="Liberation Sans" textLength="12.21" lengthAdjust="spacingAndGlyphs">25</text>
<line x1="0" y1="655.9" x2="21" y2="655.9" stroke="#8a8a8a" stroke-width="1.6"/>
<text x="4.65" y="668.80" font-size="12.2" fill="#ececec" font-weight="400" font-family="Liberation Sans" textLength="12.21" lengthAdjust="spacingAndGlyphs">26</text>
<line x1="0" y1="671.9" x2="21" y2="671.9" stroke="#8a8a8a" stroke-width="1.6"/>
<text x="4.71" y="684.80" font-size="12.2" fill="#ececec" font-weight="400" font-family="Liberation Sans" textLength="12.21" lengthAdjust="spacingAndGlyphs">27</text>
<line x1="0" y1="687.9" x2="21" y2="687.9" stroke="#8a8a8a" stroke-width="1.6"/>
<text x="4.65" y="700.80" font-size="12.2" fill="#ececec" font-weight="400" font-family="Liberation Sans" textLength="12.21" lengthAdjust="spacingAndGlyphs">28</text>
<line x1="0" y1="703.9" x2="21" y2="703.9" stroke="#8a8a8a" stroke-width="1.6"/>
<text x="4.68" y="716.80" font-size="12.2" fill="#ececec" font-weight="400" font-family="Liberation Sans" textLength="12.21" lengthAdjust="spacingAndGlyphs">29</text>
<line x1="0" y1="719.9" x2="21" y2="719.9" stroke="#8a8a8a" stroke-width="1.6"/>
<text x="4.68" y="732.80" font-size="12.2" fill="#ececec" font-weight="400" font-family="Liberation Sans" textLength="12.21" lengthAdjust="spacingAndGlyphs">30</text>
<line x1="0" y1="735.9" x2="21" y2="735.9" stroke="#8a8a8a" stroke-width="1.6"/>
<rect x="21" y="256" width="562" height="15" fill="#4472c4"/>
<rect x="21" y="272" width="562" height="16" fill="#d9e1f2"/>
<line x1="21" y1="287.8" x2="583" y2="287.8" stroke="#b0c4e8" stroke-width="1.5"/>
<line x1="21" y1="303.8" x2="583" y2="303.8" stroke="#b0c4e8" stroke-width="1.5"/>
<rect x="21" y="304" width="562" height="16" fill="#d9e1f2"/>
<line x1="21" y1="319.8" x2="583" y2="319.8" stroke="#b0c4e8" stroke-width="1.5"/>
<line x1="21" y1="335.8" x2="583" y2="335.8" stroke="#b0c4e8" stroke-width="1.5"/>
<rect x="21" y="336" width="562" height="16" fill="#d9e1f2"/>
<line x1="21" y1="351.8" x2="583" y2="351.8" stroke="#b0c4e8" stroke-width="1.5"/>
<line x1="21" y1="367.8" x2="583" y2="367.8" stroke="#b0c4e8" stroke-width="1.5"/>
<rect x="21" y="368" width="562" height="16" fill="#d9e1f2"/>
<line x1="21" y1="383.8" x2="583" y2="383.8" stroke="#b0c4e8" stroke-width="1.5"/>
<line x1="21" y1="399.8" x2="583" y2="399.8" stroke="#b0c4e8" stroke-width="1.5"/>
<rect x="21" y="400" width="562" height="16" fill="#d9e1f2"/>
<line x1="21" y1="415.8" x2="583" y2="415.8" stroke="#b0c4e8" stroke-width="1.5"/>
<line x1="21" y1="431.8" x2="583" y2="431.8" stroke="#b0c4e8" stroke-width="1.5"/>
<rect x="21" y="432" width="562" height="16" fill="#d9e1f2"/>
<line x1="21" y1="447.8" x2="583" y2="447.8" stroke="#b0c4e8" stroke-width="1.5"/>
<line x1="21" y1="463.8" x2="583" y2="463.8" stroke="#b0c4e8" stroke-width="1.5"/>
<rect x="21" y="464" width="562" height="16" fill="#d9e1f2"/>
<line x1="21" y1="479.8" x2="583" y2="479.8" stroke="#b0c4e8" stroke-width="1.5"/>
<line x1="21" y1="495.8" x2="583" y2="495.8" stroke="#b0c4e8" stroke-width="1.5"/>
<rect x="21" y="496" width="562" height="16" fill="#d9e1f2"/>
<line x1="21" y1="511.8" x2="583" y2="511.8" stroke="#b0c4e8" stroke-width="1.5"/>
<line x1="21" y1="527.8" x2="583" y2="527.8" stroke="#b0c4e8" stroke-width="1.5"/>
<rect x="21" y="528" width="562" height="16" fill="#d9e1f2"/>
<line x1="21" y1="543.8" x2="583" y2="543.8" stroke="#b0c4e8" stroke-width="1.5"/>
<line x1="583.5" y1="256" x2="583.5" y2="559" stroke="#a9bfe6" stroke-width="1.2"/>
<text x="21.99" y="268.40" font-size="10.5" fill="#ffffff" font-weight="700" font-family="Liberation Sans" textLength="23.72" lengthAdjust="spacingAndGlyphs">Date</text>
<rect x="66.4" y="256.5" width="15" height="15" fill="url(#fbg)"/>
<path d="M70.7 262.2h6.6l-3.3 3.8z" fill="#595959"/>
<text x="84.10" y="268.40" font-size="10.5" fill="#ffffff" font-weight="700" font-family="Liberation Sans" textLength="25.72" lengthAdjust="spacingAndGlyphs">Sales</text>
<rect x="119.5" y="256.5" width="15" height="15" fill="url(#fbg)"/>
<path d="M123.8 262.2h6.6l-3.3 3.8z" fill="#595959"/>
<text x="137.64" y="268.40" font-size="10.5" fill="#ffffff" font-weight="700" font-family="Liberation Sans" textLength="75.34" lengthAdjust="spacingAndGlyphs">Forecast(Sales)</text>
<rect x="213.3" y="256.5" width="15" height="15" fill="url(#fbg)"/>
<path d="M217.60000000000002 262.2h6.6l-3.3 3.8z" fill="#595959"/>
<text x="231.33" y="268.40" font-size="10.5" fill="#ffffff" font-weight="700" font-family="Liberation Sans" textLength="157.53" lengthAdjust="spacingAndGlyphs">Lower Confidence Bound(Sales)</text>
<rect x="390.2" y="256.5" width="15" height="15" fill="url(#fbg)"/>
<path d="M394.5 262.2h6.6l-3.3 3.8z" fill="#595959"/>
<text x="408.38" y="268.40" font-size="10.5" fill="#ffffff" font-weight="700" font-family="Liberation Sans" textLength="158.54" lengthAdjust="spacingAndGlyphs">Upper Confidence Bound(Sales)</text>
<rect x="567.3" y="256.5" width="15" height="15" fill="url(#fbg)"/>
<path d="M571.5999999999999 262.2h6.6l-3.3 3.8z" fill="#595959"/>
<defs><linearGradient id="fbg" x1="0" y1="0" x2="0" y2="1"><stop offset="0" stop-color="#ffffff"/><stop offset="1" stop-color="#e8e8e8"/></linearGradient></defs>
<text x="26.68" y="284.60" font-size="10.6" fill="#1f1f1f" font-weight="400" font-family="Liberation Sans" stroke="#1f1f1f" stroke-width="0.12" textLength="53.33" lengthAdjust="spacingAndGlyphs">01-03-2024</text>
<text x="116.96" y="284.60" font-size="10.6" fill="#1f1f1f" font-weight="400" font-family="Liberation Sans" stroke="#1f1f1f" stroke-width="0.12" textLength="16.98" lengthAdjust="spacingAndGlyphs">154</text>
<text x="26.68" y="300.60" font-size="10.6" fill="#1f1f1f" font-weight="400" font-family="Liberation Sans" stroke="#1f1f1f" stroke-width="0.12" textLength="53.33" lengthAdjust="spacingAndGlyphs">02-04-2024</text>
<text x="117.17" y="300.60" font-size="10.6" fill="#1f1f1f" font-weight="400" font-family="Liberation Sans" stroke="#1f1f1f" stroke-width="0.12" textLength="16.98" lengthAdjust="spacingAndGlyphs">152</text>
<text x="26.68" y="316.60" font-size="10.6" fill="#1f1f1f" font-weight="400" font-family="Liberation Sans" stroke="#1f1f1f" stroke-width="0.12" textLength="53.33" lengthAdjust="spacingAndGlyphs">03-05-2024</text>
<text x="117.01" y="316.60" font-size="10.6" fill="#1f1f1f" font-weight="400" font-family="Liberation Sans" stroke="#1f1f1f" stroke-width="0.12" textLength="16.98" lengthAdjust="spacingAndGlyphs">160</text>
<text x="26.68" y="332.60" font-size="10.6" fill="#1f1f1f" font-weight="400" font-family="Liberation Sans" stroke="#1f1f1f" stroke-width="0.12" textLength="53.33" lengthAdjust="spacingAndGlyphs">04-06-2024</text>
<text x="117.06" y="332.60" font-size="10.6" fill="#1f1f1f" font-weight="400" font-family="Liberation Sans" stroke="#1f1f1f" stroke-width="0.12" textLength="16.98" lengthAdjust="spacingAndGlyphs">165</text>
<text x="26.68" y="348.60" font-size="10.6" fill="#1f1f1f" font-weight="400" font-family="Liberation Sans" stroke="#1f1f1f" stroke-width="0.12" textLength="53.33" lengthAdjust="spacingAndGlyphs">05-07-2024</text>
<text x="117.01" y="348.60" font-size="10.6" fill="#1f1f1f" font-weight="400" font-family="Liberation Sans" stroke="#1f1f1f" stroke-width="0.12" textLength="16.98" lengthAdjust="spacingAndGlyphs">170</text>
<text x="26.68" y="364.60" font-size="10.6" fill="#1f1f1f" font-weight="400" font-family="Liberation Sans" stroke="#1f1f1f" stroke-width="0.12" textLength="53.33" lengthAdjust="spacingAndGlyphs">06-08-2024</text>
<text x="117.11" y="364.60" font-size="10.6" fill="#1f1f1f" font-weight="400" font-family="Liberation Sans" stroke="#1f1f1f" stroke-width="0.12" textLength="16.98" lengthAdjust="spacingAndGlyphs">181</text>
<text x="26.68" y="380.60" font-size="10.6" fill="#1f1f1f" font-weight="400" font-family="Liberation Sans" stroke="#1f1f1f" stroke-width="0.12" textLength="53.33" lengthAdjust="spacingAndGlyphs">07-09-2024</text>
<text x="117.06" y="380.60" font-size="10.6" fill="#1f1f1f" font-weight="400" font-family="Liberation Sans" stroke="#1f1f1f" stroke-width="0.12" textLength="16.98" lengthAdjust="spacingAndGlyphs">188</text>
<text x="210.95" y="380.60" font-size="10.6" fill="#1f1f1f" font-weight="400" font-family="Liberation Sans" stroke="#1f1f1f" stroke-width="0.12" textLength="16.89" lengthAdjust="spacingAndGlyphs">188</text>
<text x="26.68" y="396.60" font-size="10.6" fill="#1f1f1f" font-weight="400" font-family="Liberation Sans" stroke="#1f1f1f" stroke-width="0.12" textLength="53.33" lengthAdjust="spacingAndGlyphs">08-10-2024</text>
<text x="117.01" y="396.60" font-size="10.6" fill="#1f1f1f" font-weight="400" font-family="Liberation Sans" stroke="#1f1f1f" stroke-width="0.12" textLength="16.98" lengthAdjust="spacingAndGlyphs">190</text>
<text x="168.69" y="396.60" font-size="10.6" fill="#1f1f1f" font-weight="400" font-family="Liberation Sans" stroke="#1f1f1f" stroke-width="0.12" textLength="59.11" lengthAdjust="spacingAndGlyphs">193.3564396</text>
<text x="26.30" y="412.60" font-size="10.6" fill="#1f1f1f" font-weight="400" font-family="Liberation Sans" stroke="#1f1f1f" stroke-width="0.12" textLength="53.73" lengthAdjust="spacingAndGlyphs">10-11-2024</text>
<text x="168.79" y="412.60" font-size="10.6" fill="#1f1f1f" font-weight="400" font-family="Liberation Sans" stroke="#1f1f1f" stroke-width="0.12" textLength="59.11" lengthAdjust="spacingAndGlyphs">199.6136017</text>
<text x="26.31" y="428.60" font-size="10.6" fill="#1f1f1f" font-weight="400" font-family="Liberation Sans" stroke="#1f1f1f" stroke-width="0.12" textLength="53.71" lengthAdjust="spacingAndGlyphs">12-12-2024</text>
<text x="169.50" y="428.60" font-size="10.6" fill="#1f1f1f" font-weight="400" font-family="Liberation Sans" stroke="#1f1f1f" stroke-width="0.12" textLength="58.36" lengthAdjust="spacingAndGlyphs">205.6811529</text>
<text x="26.31" y="444.60" font-size="10.6" fill="#1f1f1f" font-weight="400" font-family="Liberation Sans" stroke="#1f1f1f" stroke-width="0.12" textLength="53.81" lengthAdjust="spacingAndGlyphs">13-01-2025</text>
<text x="174.96" y="444.60" font-size="10.6" fill="#1f1f1f" font-weight="400" font-family="Liberation Sans" stroke="#1f1f1f" stroke-width="0.12" textLength="52.73" lengthAdjust="spacingAndGlyphs">211.748704</text>
<text x="26.31" y="460.60" font-size="10.6" fill="#1f1f1f" font-weight="400" font-family="Liberation Sans" stroke="#1f1f1f" stroke-width="0.12" textLength="53.81" lengthAdjust="spacingAndGlyphs">14-02-2025</text>
<text x="168.74" y="460.60" font-size="10.6" fill="#1f1f1f" font-weight="400" font-family="Liberation Sans" stroke="#1f1f1f" stroke-width="0.12" textLength="59.11" lengthAdjust="spacingAndGlyphs">217.8162551</text>
<text x="26.31" y="476.60" font-size="10.6" fill="#1f1f1f" font-weight="400" font-family="Liberation Sans" stroke="#1f1f1f" stroke-width="0.12" textLength="53.81" lengthAdjust="spacingAndGlyphs">18-03-2025</text>
<text x="168.69" y="476.60" font-size="10.6" fill="#1f1f1f" font-weight="400" font-family="Liberation Sans" stroke="#1f1f1f" stroke-width="0.12" textLength="59.11" lengthAdjust="spacingAndGlyphs">223.8838063</text>
<text x="26.31" y="492.60" font-size="10.6" fill="#1f1f1f" font-weight="400" font-family="Liberation Sans" stroke="#1f1f1f" stroke-width="0.12" textLength="53.81" lengthAdjust="spacingAndGlyphs">19-04-2025</text>
<text x="168.59" y="492.60" font-size="10.6" fill="#1f1f1f" font-weight="400" font-family="Liberation Sans" stroke="#1f1f1f" stroke-width="0.12" textLength="59.11" lengthAdjust="spacingAndGlyphs">229.9513574</text>
<text x="26.58" y="508.60" font-size="10.6" fill="#1f1f1f" font-weight="400" font-family="Liberation Sans" stroke="#1f1f1f" stroke-width="0.12" textLength="53.55" lengthAdjust="spacingAndGlyphs">21-05-2025</text>
<text x="168.69" y="508.60" font-size="10.6" fill="#1f1f1f" font-weight="400" font-family="Liberation Sans" stroke="#1f1f1f" stroke-width="0.12" textLength="59.11" lengthAdjust="spacingAndGlyphs">236.0189085</text>
<text x="26.58" y="524.60" font-size="10.6" fill="#1f1f1f" font-weight="400" font-family="Liberation Sans" stroke="#1f1f1f" stroke-width="0.12" textLength="53.55" lengthAdjust="spacingAndGlyphs">22-06-2025</text>
<text x="168.79" y="524.60" font-size="10.6" fill="#1f1f1f" font-weight="400" font-family="Liberation Sans" stroke="#1f1f1f" stroke-width="0.12" textLength="59.11" lengthAdjust="spacingAndGlyphs">242.0864597</text>
<text x="26.68" y="540.60" font-size="10.6" fill="#1f1f1f" font-weight="400" font-family="Liberation Sans" stroke="#1f1f1f" stroke-width="0.12" textLength="53.44" lengthAdjust="spacingAndGlyphs">30-06-2025</text>
<text x="168.69" y="540.60" font-size="10.6" fill="#1f1f1f" font-weight="400" font-family="Liberation Sans" stroke="#1f1f1f" stroke-width="0.12" textLength="59.11" lengthAdjust="spacingAndGlyphs">243.6033475</text>
<path d="M136 368h5l-5 5z" fill="#1e7b34"/><path d="M230 368h5l-5 5z" fill="#1e7b34"/>
<rect x="332.5" y="298.5" width="635" height="337" fill="#ffffff" stroke="#d9d9d9" stroke-width="1.2"/>
<line x1="363.5" y1="554.5" x2="954.5" y2="554.5" stroke="#d9d9d9" stroke-width="1.1"/>
<text x="350.11" y="558.10" font-size="9.4" fill="#595959" font-weight="400" font-family="Liberation Sans" stroke="#595959" stroke-width="0.12" textLength="5.23" lengthAdjust="spacingAndGlyphs">0</text>
<line x1="363.5" y1="513.6" x2="954.5" y2="513.6" stroke="#d9d9d9" stroke-width="1.1"/>
<text x="344.90" y="517.20" font-size="9.4" fill="#595959" font-weight="400" font-family="Liberation Sans" stroke="#595959" stroke-width="0.12" textLength="10.46" lengthAdjust="spacingAndGlyphs">50</text>
<line x1="363.5" y1="472.7" x2="954.5" y2="472.7" stroke="#d9d9d9" stroke-width="1.1"/>
<text x="339.68" y="476.30" font-size="9.4" fill="#595959" font-weight="400" font-family="Liberation Sans" stroke="#595959" stroke-width="0.12" textLength="15.68" lengthAdjust="spacingAndGlyphs">100</text>
<line x1="363.5" y1="431.8" x2="954.5" y2="431.8" stroke="#d9d9d9" stroke-width="1.1"/>
<text x="339.68" y="435.40" font-size="9.4" fill="#595959" font-weight="400" font-family="Liberation Sans" stroke="#595959" stroke-width="0.12" textLength="15.68" lengthAdjust="spacingAndGlyphs">150</text>
<line x1="363.5" y1="390.9" x2="954.5" y2="390.9" stroke="#d9d9d9" stroke-width="1.1"/>
<text x="339.68" y="394.50" font-size="9.4" fill="#595959" font-weight="400" font-family="Liberation Sans" stroke="#595959" stroke-width="0.12" textLength="15.68" lengthAdjust="spacingAndGlyphs">200</text>
<line x1="363.5" y1="350.0" x2="954.5" y2="350.0" stroke="#d9d9d9" stroke-width="1.1"/>
<text x="339.68" y="353.60" font-size="9.4" fill="#595959" font-weight="400" font-family="Liberation Sans" stroke="#595959" stroke-width="0.12" textLength="15.68" lengthAdjust="spacingAndGlyphs">250</text>
<line x1="363.5" y1="309.1" x2="954.5" y2="309.1" stroke="#d9d9d9" stroke-width="1.1"/>
<text x="339.68" y="312.70" font-size="9.4" fill="#595959" font-weight="400" font-family="Liberation Sans" stroke="#595959" stroke-width="0.12" textLength="15.68" lengthAdjust="spacingAndGlyphs">300</text>
<g transform="rotate(-45 383.00 568.6)">
<text x="337.64" y="568.60" font-size="9.4" fill="#595959" font-weight="400" font-family="Liberation Sans" stroke="#595959" stroke-width="0.12" textLength="45.63" lengthAdjust="spacingAndGlyphs">01-03-2024</text>
</g>
<g transform="rotate(-45 417.75 568.6)">
<text x="372.39" y="568.60" font-size="9.4" fill="#595959" font-weight="400" font-family="Liberation Sans" stroke="#595959" stroke-width="0.12" textLength="45.63" lengthAdjust="spacingAndGlyphs">02-04-2024</text>
</g>
<g transform="rotate(-45 452.50 568.6)">
<text x="407.14" y="568.60" font-size="9.4" fill="#595959" font-weight="400" font-family="Liberation Sans" stroke="#595959" stroke-width="0.12" textLength="45.63" lengthAdjust="spacingAndGlyphs">03-05-2024</text>
</g>
<g transform="rotate(-45 487.25 568.6)">
<text x="441.89" y="568.60" font-size="9.4" fill="#595959" font-weight="400" font-family="Liberation Sans" stroke="#595959" stroke-width="0.12" textLength="45.63" lengthAdjust="spacingAndGlyphs">04-06-2024</text>
</g>
<g transform="rotate(-45 522.00 568.6)">
<text x="476.64" y="568.60" font-size="9.4" fill="#595959" font-weight="400" font-family="Liberation Sans" stroke="#595959" stroke-width="0.12" textLength="45.63" lengthAdjust="spacingAndGlyphs">05-07-2024</text>
</g>
<g transform="rotate(-45 556.75 568.6)">
<text x="511.39" y="568.60" font-size="9.4" fill="#595959" font-weight="400" font-family="Liberation Sans" stroke="#595959" stroke-width="0.12" textLength="45.63" lengthAdjust="spacingAndGlyphs">06-08-2024</text>
</g>
<g transform="rotate(-45 591.50 568.6)">
<text x="546.14" y="568.60" font-size="9.4" fill="#595959" font-weight="400" font-family="Liberation Sans" stroke="#595959" stroke-width="0.12" textLength="45.63" lengthAdjust="spacingAndGlyphs">07-09-2024</text>
</g>
<g transform="rotate(-45 626.25 568.6)">
<text x="580.89" y="568.60" font-size="9.4" fill="#595959" font-weight="400" font-family="Liberation Sans" stroke="#595959" stroke-width="0.12" textLength="45.63" lengthAdjust="spacingAndGlyphs">08-10-2024</text>
</g>
<g transform="rotate(-45 661.00 568.6)">
<text x="615.32" y="568.60" font-size="9.4" fill="#595959" font-weight="400" font-family="Liberation Sans" stroke="#595959" stroke-width="0.12" textLength="45.97" lengthAdjust="spacingAndGlyphs">10-11-2024</text>
</g>
<g transform="rotate(-45 695.75 568.6)">
<text x="650.08" y="568.60" font-size="9.4" fill="#595959" font-weight="400" font-family="Liberation Sans" stroke="#595959" stroke-width="0.12" textLength="45.95" lengthAdjust="spacingAndGlyphs">12-12-2024</text>
</g>
<g transform="rotate(-45 730.50 568.6)">
<text x="684.83" y="568.60" font-size="9.4" fill="#595959" font-weight="400" font-family="Liberation Sans" stroke="#595959" stroke-width="0.12" textLength="46.04" lengthAdjust="spacingAndGlyphs">13-01-2025</text>
</g>
<g transform="rotate(-45 765.25 568.6)">
<text x="719.58" y="568.60" font-size="9.4" fill="#595959" font-weight="400" font-family="Liberation Sans" stroke="#595959" stroke-width="0.12" textLength="46.04" lengthAdjust="spacingAndGlyphs">14-02-2025</text>
</g>
<g transform="rotate(-45 800.00 568.6)">
<text x="754.33" y="568.60" font-size="9.4" fill="#595959" font-weight="400" font-family="Liberation Sans" stroke="#595959" stroke-width="0.12" textLength="46.04" lengthAdjust="spacingAndGlyphs">18-03-2025</text>
</g>
<g transform="rotate(-45 834.75 568.6)">
<text x="789.08" y="568.60" font-size="9.4" fill="#595959" font-weight="400" font-family="Liberation Sans" stroke="#595959" stroke-width="0.12" textLength="46.04" lengthAdjust="spacingAndGlyphs">19-04-2025</text>
</g>
<g transform="rotate(-45 869.50 568.6)">
<text x="824.05" y="568.60" font-size="9.4" fill="#595959" font-weight="400" font-family="Liberation Sans" stroke="#595959" stroke-width="0.12" textLength="45.81" lengthAdjust="spacingAndGlyphs">21-05-2025</text>
</g>
<g transform="rotate(-45 904.25 568.6)">
<text x="858.80" y="568.60" font-size="9.4" fill="#595959" font-weight="400" font-family="Liberation Sans" stroke="#595959" stroke-width="0.12" textLength="45.81" lengthAdjust="spacingAndGlyphs">22-06-2025</text>
</g>
<g transform="rotate(-45 939.00 568.6)">
<text x="893.64" y="568.60" font-size="9.4" fill="#595959" font-weight="400" font-family="Liberation Sans" stroke="#595959" stroke-width="0.12" textLength="45.72" lengthAdjust="spacingAndGlyphs">30-06-2025</text>
</g>
<polyline points="589.90,400.72 624.65,384.88 659.40,376.11 694.15,368.48 728.90,361.35 763.65,354.53 798.40,347.91 833.15,341.46 867.90,335.13 902.65,328.89 937.40,326.47" fill="none" stroke="#f09a5c" stroke-width="1" stroke-linejoin="round" stroke-linecap="round"/>
<polyline points="589.90,400.72 624.65,407.79 659.40,406.33 694.15,404.02 728.90,401.23 763.65,398.13 798.40,394.81 833.15,391.34 867.90,387.75 902.65,384.05 937.40,384.00" fill="none" stroke="#f09a5c" stroke-width="1" stroke-linejoin="round" stroke-linecap="round"/>
<polyline points="589.90,400.72 624.65,396.33 659.40,391.22 694.15,386.25 728.90,381.29 763.65,376.33 798.40,371.36 833.15,366.40 867.90,361.44 902.65,356.47 937.40,355.23" fill="none" stroke="#ed7d31" stroke-width="2.6" stroke-linejoin="round" stroke-linecap="round"/>
<polyline points="381.40,428.53 416.15,430.16 450.90,423.62 485.65,419.53 520.40,415.44 555.15,406.44 589.90,400.72 624.65,399.08" fill="none" stroke="#4472c4" stroke-width="2.6" stroke-linejoin="round" stroke-linecap="round"/>
<line x1="403.8" y1="619.2" x2="427.2" y2="619.2" stroke="#4472c4" stroke-width="2.6"/>
<text x="428.42" y="621.90" font-size="8.8" fill="#595959" font-weight="400" font-family="Liberation Sans" stroke="#595959" stroke-width="0.12" textLength="20.88" lengthAdjust="spacingAndGlyphs">Sales</text>
<line x1="468.9" y1="619.2" x2="491.9" y2="619.2" stroke="#ed7d31" stroke-width="2.6"/>
<text x="492.91" y="621.90" font-size="8.8" fill="#595959" font-weight="400" font-family="Liberation Sans" stroke="#595959" stroke-width="0.12" textLength="61.14" lengthAdjust="spacingAndGlyphs">Forecast(Sales)</text>
<line x1="574.4" y1="619.2" x2="596.8" y2="619.2" stroke="#f09a5c" stroke-width="1.2"/>
<text x="597.89" y="621.90" font-size="8.8" fill="#595959" font-weight="400" font-family="Liberation Sans" stroke="#595959" stroke-width="0.12" textLength="128.68" lengthAdjust="spacingAndGlyphs">Lower Confidence Bound(Sales)</text>
<line x1="747.2" y1="619.2" x2="768.5" y2="619.2" stroke="#f09a5c" stroke-width="1.2"/>
<text x="770.23" y="621.90" font-size="8.8" fill="#595959" font-weight="400" font-family="Liberation Sans" stroke="#595959" stroke-width="0.12" textLength="128.33" lengthAdjust="spacingAndGlyphs">Upper Confidence Bound(Sales)</text>
<rect x="987" y="345.3" width="396" height="239.6" fill="#ffffff"/>
<text x="1168.72" y="368.50" font-size="14" fill="#595959" font-weight="400" font-family="Liberation Sans" stroke="#595959" stroke-width="0.12" textLength="32.25" lengthAdjust="spacingAndGlyphs">Sales</text>
<line x1="1030.4" y1="529.4" x2="1363.8" y2="529.4" stroke="#d9d9d9" stroke-width="1.1"/>
<text x="1016.02" y="532.30" font-size="9.2" fill="#595959" font-weight="400" font-family="Liberation Sans" stroke="#595959" stroke-width="0.12" textLength="5.12" lengthAdjust="spacingAndGlyphs">0</text>
<line x1="1030.4" y1="515.1999999999999" x2="1363.8" y2="515.1999999999999" stroke="#d9d9d9" stroke-width="1.1"/>
<text x="1010.91" y="518.10" font-size="9.2" fill="#595959" font-weight="400" font-family="Liberation Sans" stroke="#595959" stroke-width="0.12" textLength="10.23" lengthAdjust="spacingAndGlyphs">20</text>
<line x1="1030.4" y1="501.0" x2="1363.8" y2="501.0" stroke="#d9d9d9" stroke-width="1.1"/>
<text x="1010.91" y="503.90" font-size="9.2" fill="#595959" font-weight="400" font-family="Liberation Sans" stroke="#595959" stroke-width="0.12" textLength="10.23" lengthAdjust="spacingAndGlyphs">40</text>
<line x1="1030.4" y1="486.79999999999995" x2="1363.8" y2="486.79999999999995" stroke="#d9d9d9" stroke-width="1.1"/>
<text x="1010.91" y="489.70" font-size="9.2" fill="#595959" font-weight="400" font-family="Liberation Sans" stroke="#595959" stroke-width="0.12" textLength="10.23" lengthAdjust="spacingAndGlyphs">60</text>
<line x1="1030.4" y1="472.59999999999997" x2="1363.8" y2="472.59999999999997" stroke="#d9d9d9" stroke-width="1.1"/>
<text x="1010.91" y="475.50" font-size="9.2" fill="#595959" font-weight="400" font-family="Liberation Sans" stroke="#595959" stroke-width="0.12" textLength="10.23" lengthAdjust="spacingAndGlyphs">80</text>
<line x1="1030.4" y1="458.4" x2="1363.8" y2="458.4" stroke="#d9d9d9" stroke-width="1.1"/>
<text x="1005.80" y="461.30" font-size="9.2" fill="#595959" font-weight="400" font-family="Liberation Sans" stroke="#595959" stroke-width="0.12" textLength="15.35" lengthAdjust="spacingAndGlyphs">100</text>
<line x1="1030.4" y1="444.2" x2="1363.8" y2="444.2" stroke="#d9d9d9" stroke-width="1.1"/>
<text x="1005.80" y="447.10" font-size="9.2" fill="#595959" font-weight="400" font-family="Liberation Sans" stroke="#595959" stroke-width="0.12" textLength="15.35" lengthAdjust="spacingAndGlyphs">120</text>
<line x1="1030.4" y1="430.0" x2="1363.8" y2="430.0" stroke="#d9d9d9" stroke-width="1.1"/>
<text x="1005.80" y="432.90" font-size="9.2" fill="#595959" font-weight="400" font-family="Liberation Sans" stroke="#595959" stroke-width="0.12" textLength="15.35" lengthAdjust="spacingAndGlyphs">140</text>
<line x1="1030.4" y1="415.79999999999995" x2="1363.8" y2="415.79999999999995" stroke="#d9d9d9" stroke-width="1.1"/>
<text x="1005.80" y="418.70" font-size="9.2" fill="#595959" font-weight="400" font-family="Liberation Sans" stroke="#595959" stroke-width="0.12" textLength="15.35" lengthAdjust="spacingAndGlyphs">160</text>
<line x1="1030.4" y1="401.59999999999997" x2="1363.8" y2="401.59999999999997" stroke="#d9d9d9" stroke-width="1.1"/>
<text x="1005.80" y="404.50" font-size="9.2" fill="#595959" font-weight="400" font-family="Liberation Sans" stroke="#595959" stroke-width="0.12" textLength="15.35" lengthAdjust="spacingAndGlyphs">180</text>
<line x1="1030.4" y1="387.4" x2="1363.8" y2="387.4" stroke="#d9d9d9" stroke-width="1.1"/>
<text x="1005.80" y="390.30" font-size="9.2" fill="#595959" font-weight="400" font-family="Liberation Sans" stroke="#595959" stroke-width="0.12" textLength="15.35" lengthAdjust="spacingAndGlyphs">200</text>
<line x1="1030.4" y1="387.4" x2="1030.4" y2="529.4" stroke="#d9d9d9" stroke-width="1.1"/>
<line x1="1051.6225872689938" y1="387.4" x2="1051.6225872689938" y2="529.4" stroke="#d9d9d9" stroke-width="1.1"/>
<line x1="1072.1605749486653" y1="387.4" x2="1072.1605749486653" y2="529.4" stroke="#d9d9d9" stroke-width="1.1"/>
<line x1="1093.3831622176592" y1="387.4" x2="1093.3831622176592" y2="529.4" stroke="#d9d9d9" stroke-width="1.1"/>
<line x1="1113.9211498973307" y1="387.4" x2="1113.9211498973307" y2="529.4" stroke="#d9d9d9" stroke-width="1.1"/>
<line x1="1135.1437371663244" y1="387.4" x2="1135.1437371663244" y2="529.4" stroke="#d9d9d9" stroke-width="1.1"/>
<line x1="1156.3663244353183" y1="387.4" x2="1156.3663244353183" y2="529.4" stroke="#d9d9d9" stroke-width="1.1"/>
<line x1="1176.9043121149898" y1="387.4" x2="1176.9043121149898" y2="529.4" stroke="#d9d9d9" stroke-width="1.1"/>
<line x1="1198.1268993839835" y1="387.4" x2="1198.1268993839835" y2="529.4" stroke="#d9d9d9" stroke-width="1.1"/>
<line x1="1218.664887063655" y1="387.4" x2="1218.664887063655" y2="529.4" stroke="#d9d9d9" stroke-width="1.1"/>
<line x1="1239.887474332649" y1="387.4" x2="1239.887474332649" y2="529.4" stroke="#d9d9d9" stroke-width="1.1"/>
<line x1="1261.1100616016427" y1="387.4" x2="1261.1100616016427" y2="529.4" stroke="#d9d9d9" stroke-width="1.1"/>
<line x1="1280.2788501026694" y1="387.4" x2="1280.2788501026694" y2="529.4" stroke="#d9d9d9" stroke-width="1.1"/>
<line x1="1301.501437371663" y1="387.4" x2="1301.501437371663" y2="529.4" stroke="#d9d9d9" stroke-width="1.1"/>
<line x1="1322.0394250513345" y1="387.4" x2="1322.0394250513345" y2="529.4" stroke="#d9d9d9" stroke-width="1.1"/>
<line x1="1343.2620123203285" y1="387.4" x2="1343.2620123203285" y2="529.4" stroke="#d9d9d9" stroke-width="1.1"/>
<line x1="1363.8" y1="387.4" x2="1363.8" y2="529.4" stroke="#d9d9d9" stroke-width="1.1"/>
<g transform="rotate(-45 1033.20 543.0)">
<text x="987.34" y="543.00" font-size="9.4" fill="#595959" font-weight="400" font-family="Liberation Sans" stroke="#595959" stroke-width="0.12" textLength="46.14" lengthAdjust="spacingAndGlyphs">01-03-2024</text>
</g>
<g transform="rotate(-45 1054.42 543.0)">
<text x="1008.56" y="543.00" font-size="9.4" fill="#595959" font-weight="400" font-family="Liberation Sans" stroke="#595959" stroke-width="0.12" textLength="46.14" lengthAdjust="spacingAndGlyphs">01-04-2024</text>
</g>
<g transform="rotate(-45 1074.96 543.0)">
<text x="1029.10" y="543.00" font-size="9.4" fill="#595959" font-weight="400" font-family="Liberation Sans" stroke="#595959" stroke-width="0.12" textLength="46.14" lengthAdjust="spacingAndGlyphs">01-05-2024</text>
</g>
<g transform="rotate(-45 1096.18 543.0)">
<text x="1050.32" y="543.00" font-size="9.4" fill="#595959" font-weight="400" font-family="Liberation Sans" stroke="#595959" stroke-width="0.12" textLength="46.14" lengthAdjust="spacingAndGlyphs">01-06-2024</text>
</g>
<g transform="rotate(-45 1116.72 543.0)">
<text x="1070.86" y="543.00" font-size="9.4" fill="#595959" font-weight="400" font-family="Liberation Sans" stroke="#595959" stroke-width="0.12" textLength="46.14" lengthAdjust="spacingAndGlyphs">01-07-2024</text>
</g>
<g transform="rotate(-45 1137.94 543.0)">
<text x="1092.08" y="543.00" font-size="9.4" fill="#595959" font-weight="400" font-family="Liberation Sans" stroke="#595959" stroke-width="0.12" textLength="46.14" lengthAdjust="spacingAndGlyphs">01-08-2024</text>
</g>
<g transform="rotate(-45 1159.17 543.0)">
<text x="1113.31" y="543.00" font-size="9.4" fill="#595959" font-weight="400" font-family="Liberation Sans" stroke="#595959" stroke-width="0.12" textLength="46.14" lengthAdjust="spacingAndGlyphs">01-09-2024</text>
</g>
<g transform="rotate(-45 1179.70 543.0)">
<text x="1133.84" y="543.00" font-size="9.4" fill="#595959" font-weight="400" font-family="Liberation Sans" stroke="#595959" stroke-width="0.12" textLength="46.14" lengthAdjust="spacingAndGlyphs">01-10-2024</text>
</g>
<g transform="rotate(-45 1200.93 543.0)">
<text x="1155.06" y="543.00" font-size="9.4" fill="#595959" font-weight="400" font-family="Liberation Sans" stroke="#595959" stroke-width="0.12" textLength="46.15" lengthAdjust="spacingAndGlyphs">01-11-2024</text>
</g>
<g transform="rotate(-45 1221.46 543.0)">
<text x="1175.60" y="543.00" font-size="9.4" fill="#595959" font-weight="400" font-family="Liberation Sans" stroke="#595959" stroke-width="0.12" textLength="46.14" lengthAdjust="spacingAndGlyphs">01-12-2024</text>
</g>
<g transform="rotate(-45 1242.69 543.0)">
<text x="1196.83" y="543.00" font-size="9.4" fill="#595959" font-weight="400" font-family="Liberation Sans" stroke="#595959" stroke-width="0.12" textLength="46.23" lengthAdjust="spacingAndGlyphs">01-01-2025</text>
</g>
<g transform="rotate(-45 1263.91 543.0)">
<text x="1218.05" y="543.00" font-size="9.4" fill="#595959" font-weight="400" font-family="Liberation Sans" stroke="#595959" stroke-width="0.12" textLength="46.23" lengthAdjust="spacingAndGlyphs">01-02-2025</text>
</g>
<g transform="rotate(-45 1283.08 543.0)">
<text x="1237.22" y="543.00" font-size="9.4" fill="#595959" font-weight="400" font-family="Liberation Sans" stroke="#595959" stroke-width="0.12" textLength="46.23" lengthAdjust="spacingAndGlyphs">01-03-2025</text>
</g>
<g transform="rotate(-45 1304.30 543.0)">
<text x="1258.44" y="543.00" font-size="9.4" fill="#595959" font-weight="400" font-family="Liberation Sans" stroke="#595959" stroke-width="0.12" textLength="46.23" lengthAdjust="spacingAndGlyphs">01-04-2025</text>
</g>
<g transform="rotate(-45 1324.84 543.0)">
<text x="1278.98" y="543.00" font-size="9.4" fill="#595959" font-weight="400" font-family="Liberation Sans" stroke="#595959" stroke-width="0.12" textLength="46.23" lengthAdjust="spacingAndGlyphs">01-05-2025</text>
</g>
<g transform="rotate(-45 1346.06 543.0)">
<text x="1300.20" y="543.00" font-size="9.4" fill="#595959" font-weight="400" font-family="Liberation Sans" stroke="#595959" stroke-width="0.12" textLength="46.23" lengthAdjust="spacingAndGlyphs">01-06-2025</text>
</g>
<polyline points="1030.40,420.06 1052.31,421.48 1073.53,415.80 1095.44,412.25 1116.66,408.70 1138.57,400.89 1160.47,395.92 1181.70,394.50" fill="none" stroke="#4472c4" stroke-width="1.8" stroke-linejoin="round" stroke-linecap="round"/>
<rect x="987" y="345.3" width="396" height="239.6" fill="none" stroke="#959595" stroke-width="1.6"/>
<circle cx="987" cy="345.3" r="5.6" fill="#ffffff" stroke="#636363" stroke-width="2.3"/>
<circle cx="987" cy="465.1" r="5.6" fill="#ffffff" stroke="#636363" stroke-width="2.3"/>
<circle cx="987" cy="584.9" r="5.6" fill="#ffffff" stroke="#636363" stroke-width="2.3"/>
<circle cx="1185" cy="345.3" r="5.6" fill="#ffffff" stroke="#636363" stroke-width="2.3"/>
<circle cx="1185" cy="584.9" r="5.6" fill="#ffffff" stroke="#636363" stroke-width="2.3"/>
<circle cx="1383" cy="345.3" r="5.6" fill="#ffffff" stroke="#636363" stroke-width="2.3"/>
<circle cx="1383" cy="465.1" r="5.6" fill="#ffffff" stroke="#636363" stroke-width="2.3"/>
<circle cx="1383" cy="584.9" r="5.6" fill="#ffffff" stroke="#636363" stroke-width="2.3"/>
<rect x="1398.5" y="345.8" width="33" height="33" fill="#ffffff" stroke="#8c8c8c" stroke-width="1"/>
<rect x="1398.5" y="391.5" width="33" height="33" fill="#ffffff" stroke="#8c8c8c" stroke-width="1"/>
<rect x="1398.5" y="436.5" width="33" height="33" fill="#ffffff" stroke="#8c8c8c" stroke-width="1"/>
<path d="M1414.1 353.8v16M1406.1 361.8h16" stroke="#4f8a6f" stroke-width="4.8"/>
<path d="M1424.2 396.8L1425 399.5 1418.5 407.5 1416 405.5Z" fill="#4a4a4a"/>
<path d="M1415.8 406.2C1412.5 404.6 1409 406.6 1408.6 410.6 1408.2 413.6 1406.6 415.6 1404 417 1409.5 417.6 1414.5 416 1417.2 411.6Z" fill="#2f66ad"/>
<ellipse cx="1412.3" cy="409.6" rx="2" ry="1.5" fill="#e8eef8" transform="rotate(-35 1412.3 409.6)"/>
<path d="M1402.5 443.5h23.5l-9 10.5v11h-4.5v-11z" fill="#4a4a4a"/><path d="M1414.8 454.5l1.5-1.6v12.2h-1.5z" fill="#9a9a9a"/><path d="M1405 446h19" stroke="#7a7a7a" stroke-width="1"/>
<rect x="0" y="732" width="1536" height="64" fill="#656565"/>
<line x1="0" y1="759.3" x2="1536" y2="759.3" stroke="#505050" stroke-width="1.3"/>
<rect x="94.7" y="732" width="71.3" height="24.8" fill="#ffffff"/>
<rect x="94.7" y="754.8" width="71.3" height="2.2" fill="#217346"/>
<text x="104.03" y="749.60" font-size="16.5" fill="#217346" font-weight="700" font-family="Liberation Sans" textLength="51.90" lengthAdjust="spacingAndGlyphs">Sheet2</text>
<text x="176.62" y="749.60" font-size="16.5" fill="#ececec" font-weight="400" font-family="Liberation Sans" stroke="#ececec" stroke-width="0.12" textLength="47.65" lengthAdjust="spacingAndGlyphs">Sheet1</text>
<line x1="236.5" y1="736" x2="236.5" y2="756" stroke="#8a8a8a" stroke-width="1"/>
<circle cx="277" cy="745.3" r="8.6" fill="none" stroke="#f0f0f0" stroke-width="1.3"/><path d="M277 740.5v9.6M272.2 745.3h9.6" stroke="#f0f0f0" stroke-width="1.4"/>
<path d="M28.5 741v8.5l-4-4.25z" fill="#8e8e8e"/><path d="M50.5 741v8.5l4-4.25z" fill="#8e8e8e"/>
<rect x="918.8" y="740" width="2.6" height="2.6" fill="#f0f0f0"/>
<rect x="918.8" y="744.5" width="2.6" height="2.6" fill="#f0f0f0"/>
<rect x="918.8" y="749" width="2.6" height="2.6" fill="#f0f0f0"/>
<rect x="935.8" y="735.6" width="19" height="18.8" fill="#d4d4d4"/>
<path d="M947.5 741v8.5l-4.5-4.25z" fill="#222"/>
<rect x="956" y="735.6" width="513" height="18.8" fill="#d4d4d4"/>
<rect x="1469" y="735.6" width="25" height="18.8" fill="#454545"/>
<rect x="1494.5" y="735.6" width="19.2" height="18.8" fill="#d4d4d4"/>
<path d="M1501.5 741v8.5l4.5-4.25z" fill="#222"/>
<rect x="1513" y="240" width="23" height="492" fill="#656565"/>
<rect x="1516" y="242" width="18" height="18" fill="#d4d4d4"/>
<path d="M1520.8 253.3h8.6l-4.3-4.8z" fill="#222"/>
<rect x="1516" y="262" width="18" height="435" fill="#d4d4d4"/>
<rect x="1515" y="697" width="19.5" height="16.3" fill="#454545"/>
<rect x="1516" y="714.3" width="18" height="18" fill="#d4d4d4"/>
<path d="M1520.8 720.5h8.4l-4.2 4.5z" fill="#222"/>
<text x="19.86" y="783.40" font-size="13" fill="#ececec" font-weight="400" font-family="Liberation Sans" stroke="#ececec" stroke-width="0.12" textLength="33.84" lengthAdjust="spacingAndGlyphs">Ready</text>
<g fill="none" stroke="#e8e8e8" stroke-width="1.3"><path d="M98.3 771.9A6.9 6.9 0 0 0 98.6 785.3" stroke-dasharray="2.4 1.2"/><path d="M100.2 770.2V777.5M98.2 777.5H106"/><path d="M100.8 780.3L109.7 787.8M100.8 787.8L109.5 780.6" stroke-width="1.7"/></g><path d="M105 774.8l3.6 2.7-3.6 2.7z" fill="#e8e8e8"/>
<text x="112.99" y="783.50" font-size="13" fill="#ffffff" font-weight="700" font-family="Liberation Sans" textLength="150.15" lengthAdjust="spacingAndGlyphs">Accessibility: Investigate</text>
<rect x="1162" y="759" width="50" height="37" fill="#474747"/>
<g fill="none" stroke="#f0f0f0" stroke-width="1"><rect x="1179.5" y="771.5" width="15" height="15"/><path d="M1184.5 771.5v15M1189.5 771.5v15M1179.5 776.5h15M1179.5 781.5h15"/></g>
<g fill="none" stroke="#d8d8d8" stroke-width="1"><rect x="1228.5" y="771.5" width="15.5" height="15"/><rect x="1231.5" y="774.5" width="9.5" height="9"/><path d="M1233.5 777h5.5M1233.5 779.5h5.5M1233.5 782h5.5"/></g>
<g><rect x="1278" y="771.5" width="15.5" height="15" fill="none" stroke="#d8d8d8" stroke-width="1"/><rect x="1279" y="772" width="4" height="8.5" fill="#f0f0f0"/><rect x="1284" y="772" width="4" height="8.5" fill="#f0f0f0"/></g>
<line x1="1317" y1="778.4" x2="1327" y2="778.4" stroke="#cfcfcf" stroke-width="1.8"/>
<line x1="1333.5" y1="778.4" x2="1451.6" y2="778.4" stroke="#f4f4f4" stroke-width="2"/>
<rect x="1370.2" y="771.9" width="6.8" height="13.5" fill="#f4f4f4"/>
<line x1="1392.5" y1="774.5" x2="1392.5" y2="782.5" stroke="#f0f0f0" stroke-width="1.2"/>
<path d="M1458 778.5h10M1463 773.5v10" stroke="#d8d8d8" stroke-width="1.2"/>
<text x="1488.64" y="783.30" font-size="12.5" fill="#ececec" font-weight="400" font-family="Liberation Sans" stroke="#ececec" stroke-width="0.12" textLength="26.23" lengthAdjust="spacingAndGlyphs">69%</text>
</svg>
</body></html>
